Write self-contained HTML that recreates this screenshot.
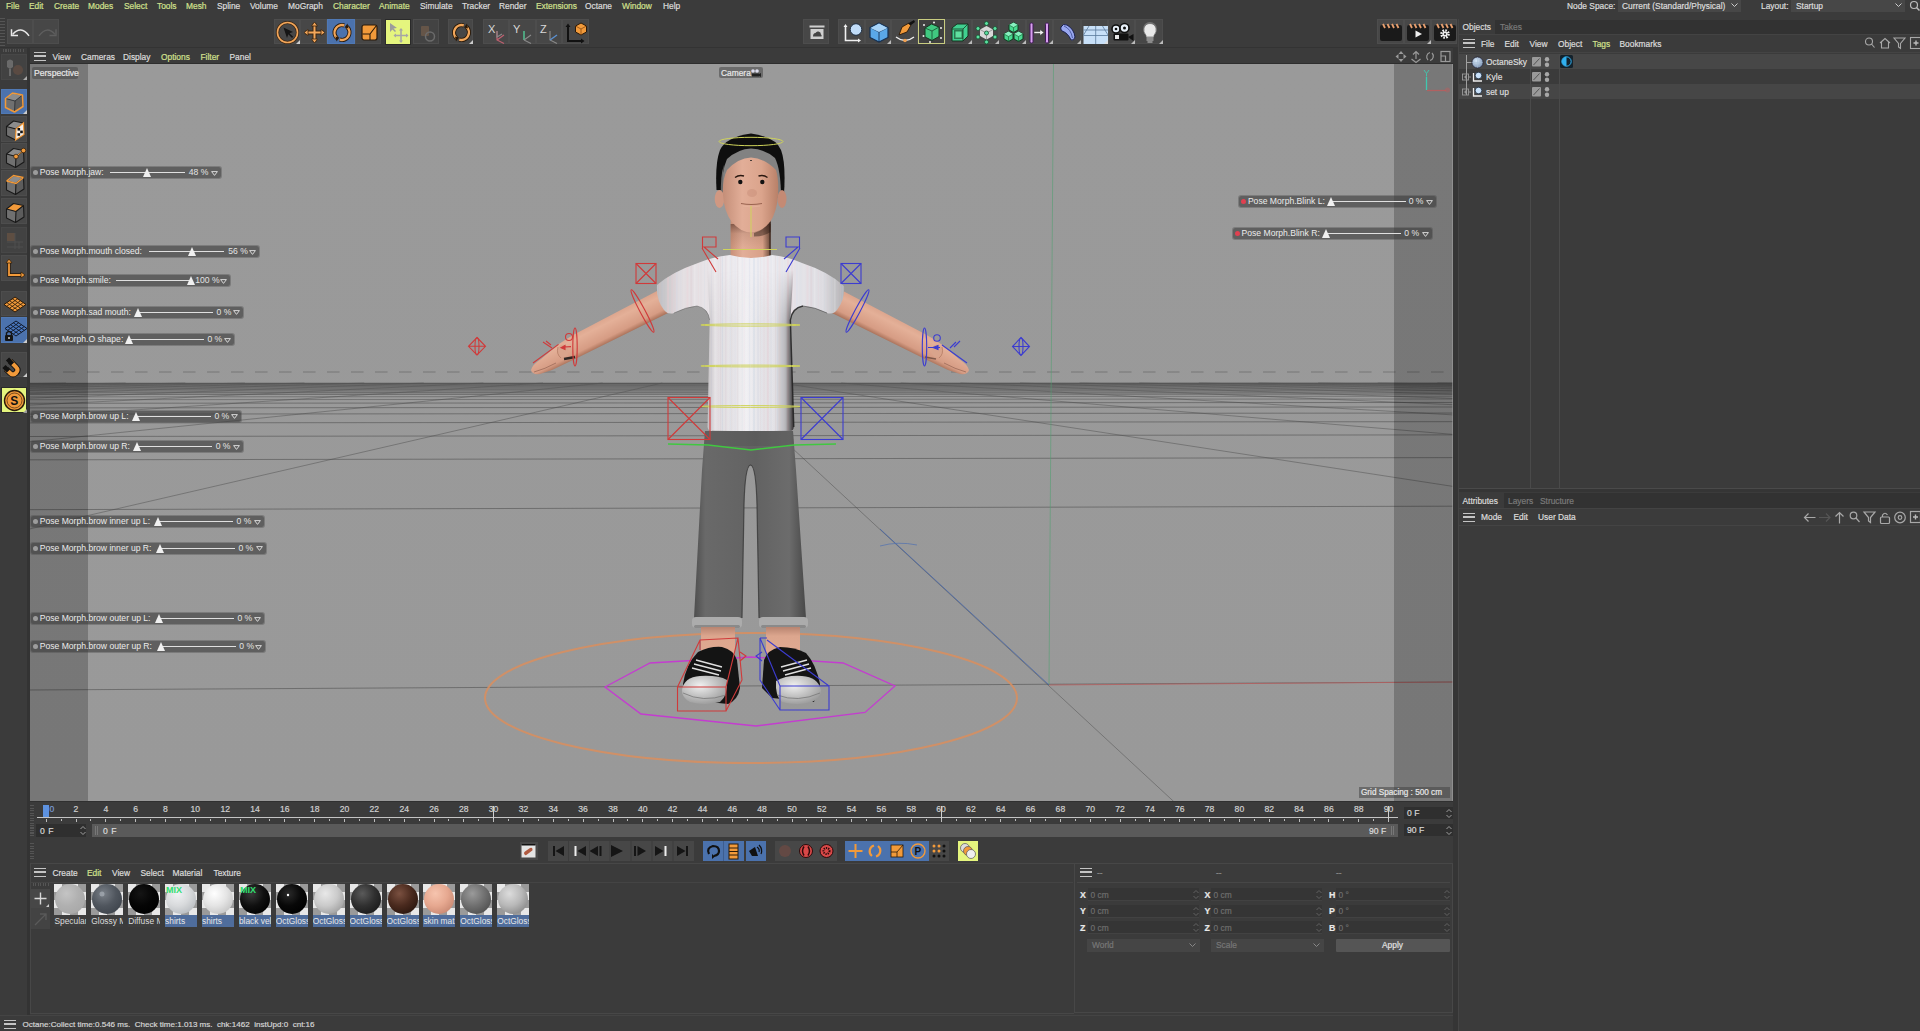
<!DOCTYPE html>
<html><head><meta charset="utf-8">
<style>
*{margin:0;padding:0;box-sizing:border-box}
html,body{width:1920px;height:1031px;overflow:hidden;background:#3b3b3b;font-family:"Liberation Sans",sans-serif;color:#d8d8d8;position:relative}
.a{position:absolute}
.t{position:absolute;white-space:nowrap;font-size:8.4px;line-height:10px;color:#dcdcdc;-webkit-text-stroke:0.2px currentColor}
.y{color:#d2e08e}
.g{color:#8a8a8a}
.rn{width:20px;text-align:center;font-size:8.6px;color:#d0d0d0}
.bt{position:absolute;width:26px;height:25px;background:#474747;border:1px solid #4d4d4d}
.bt svg{position:absolute;left:0;top:0}
.ham{position:absolute;width:11.5px;height:9px;border-top:1.5px solid #c4c4c4;border-bottom:1.5px solid #c4c4c4}
.ham:after{content:"";position:absolute;left:0;right:0;top:2.25px;height:1.5px;background:#c4c4c4}
.pm{position:absolute;height:11px;background:rgba(60,60,60,0.62);border-radius:2px;box-shadow:0 0 0 1px rgba(70,70,70,0.35)}
.pm .d{position:absolute;left:2px;top:3px;width:5px;height:5px;border-radius:50%;background:#9c9c9c}
.pm .l{position:absolute;left:8.5px;top:0;font-size:8.6px;line-height:11px;color:#ececec;white-space:nowrap}
.pm .ln{position:absolute;top:5px;height:1px;background:#e0e0e0}
.pm .th{position:absolute;top:1px;width:0;height:0;border-left:4px solid transparent;border-right:4px solid transparent;border-bottom:9px solid #f0f0f0}
.pm .v{position:absolute;top:0;font-size:8.6px;line-height:11px;color:#e4e4e4;white-space:nowrap}
.pm .dd{position:absolute;top:2.5px;width:7px;height:5px;background:linear-gradient(to bottom right,transparent 49%,#ddd 50%,#ddd 62%,transparent 63%),linear-gradient(to bottom left,transparent 49%,#ddd 50%,#ddd 62%,transparent 63%);}
.pm .dd:before{content:"";position:absolute;left:0;top:0;width:7px;height:1px;background:#ddd}
.mt{position:absolute;top:884px;width:32px;height:44px}
.mt .s{position:absolute;left:0;top:0;width:32px;height:31px;background:#d8d8d8;overflow:hidden}
.mt .lb{position:absolute;left:0;top:31px;width:32px;height:12px;font-size:8.4px;line-height:12px;color:#dcdcdc;overflow:hidden;white-space:nowrap;background:#3e3e3e}
.mt.sel .lb{background:#4f6d9c;color:#e8e8e8}
.fld{position:absolute;height:13px;background:#353535;border-bottom:1px solid #424242}
</style></head><body>
<!-- menu -->
<span class="t y" style="left:6px;top:1px">File</span>
<span class="t y" style="left:29px;top:1px">Edit</span>
<span class="t y" style="left:54px;top:1px">Create</span>
<span class="t y" style="left:88px;top:1px">Modes</span>
<span class="t y" style="left:124px;top:1px">Select</span>
<span class="t y" style="left:157px;top:1px">Tools</span>
<span class="t y" style="left:186px;top:1px">Mesh</span>
<span class="t" style="left:217px;top:1px">Spline</span>
<span class="t" style="left:250px;top:1px">Volume</span>
<span class="t" style="left:288px;top:1px">MoGraph</span>
<span class="t y" style="left:333px;top:1px">Character</span>
<span class="t y" style="left:379px;top:1px">Animate</span>
<span class="t" style="left:420px;top:1px">Simulate</span>
<span class="t" style="left:462px;top:1px">Tracker</span>
<span class="t" style="left:499px;top:1px">Render</span>
<span class="t y" style="left:536px;top:1px">Extensions</span>
<span class="t" style="left:585px;top:1px">Octane</span>
<span class="t y" style="left:622px;top:1px">Window</span>
<span class="t" style="left:663px;top:1px">Help</span>
<span class="t" style="left:1567px;top:1px">Node Space:</span>
<div class="a" style="left:1618px;top:0;width:123px;height:12px;background:#474747"></div>
<span class="t" style="left:1622px;top:1px">Current (Standard/Physical)</span>
<svg class="a" style="left:1731px;top:3px" width="7" height="5"><path d="M0.5 0.5 L3.5 3.5 L6.5 0.5" stroke="#ccc" fill="none"/></svg>
<span class="t" style="left:1761px;top:1px">Layout:</span>
<div class="a" style="left:1791px;top:0;width:114px;height:12px;background:#474747"></div>
<span class="t" style="left:1796px;top:1px">Startup</span>
<svg class="a" style="left:1895px;top:3px" width="7" height="5"><path d="M0.5 0.5 L3.5 3.5 L6.5 0.5" stroke="#ccc" fill="none"/></svg>
<svg class="a" style="left:1909px;top:0px" width="11" height="12"><circle cx="5" cy="5" r="3.5" stroke="#bbb" fill="none" stroke-width="1.2"/><path d="M7.5 7.5 L10.5 10.5" stroke="#bbb" stroke-width="1.5"/></svg>
<!-- toolbar separator lines -->
<div class="a" style="left:0;top:47px;width:1457px;height:1px;background:#333"></div>
<div class="a" style="left:0;top:18px;width:5px;height:28px;background:repeating-linear-gradient(#555 0 1px,transparent 1px 3px)"></div>
<!-- undo/redo -->
<div class="bt" style="left:7px;top:19px;width:26px"><svg width="26" height="25"><path d="M3.5 9.3 V15.5 H10" stroke="#e8e8e8" stroke-width="1.5" fill="none"/><path d="M4.6 14.4 Q13 5 21 15.9" stroke="#e8e8e8" stroke-width="1.5" fill="none"/></svg></div>
<div class="bt" style="left:33px;top:19px;width:26px"><svg width="26" height="25"><path d="M22 9.3 V15.5 H15.5" stroke="#5e5e5e" stroke-width="1.4" fill="none"/><path d="M5 15.9 Q13 5 21 14.4" stroke="#5e5e5e" stroke-width="1.4" fill="none"/></svg></div>
<!-- viewport menu -->
<div class="a" style="left:30px;top:63px;width:1423px;height:1px;background:#2e2e2e"></div>
<div class="ham" style="left:34px;top:52px"></div>
<span class="t" style="left:52.5px;top:51.5px">View</span>
<span class="t" style="left:81px;top:51.5px">Cameras</span>
<span class="t" style="left:123px;top:51.5px">Display</span>
<span class="t y" style="left:161px;top:51.5px">Options</span>
<span class="t y" style="left:200.5px;top:51.5px">Filter</span>
<span class="t" style="left:229.5px;top:51.5px">Panel</span>
<!-- tools group -->
<div class="bt" style="left:274px;top:19px"><svg width="26" height="25"><circle cx="12.5" cy="12.5" r="10" stroke="#3a2410" stroke-width="3" fill="none"/><circle cx="12.5" cy="12.5" r="10" stroke="#f2a65a" stroke-width="1.6" fill="none"/><path d="M8.5 7.5 L12 18 L13.3 14.3 L17 18 L18.2 16.8 L14.5 13.2 L18 12 Z" fill="#151515"/><path d="M21 24 L25 20 L25 24Z" fill="#ccc"/></svg></div>
<div class="bt" style="left:300px;top:19px;width:27px"><svg width="27" height="25"><path d="M13.5 3.5 V21.5 M4.5 12.5 H22.5" stroke="#3a2410" stroke-width="4"/><path d="M13.5 3.5 V21.5 M4.5 12.5 H22.5" stroke="#f2a65a" stroke-width="2"/><path d="M13.5 2 L10.5 6 H16.5Z M13.5 23 L10.5 19 H16.5Z M3 12.5 L7 9.5 V15.5Z M24 12.5 L20 9.5 V15.5Z" fill="#f2a65a" stroke="#3a2410" stroke-width="0.8"/></svg></div>
<div class="bt" style="left:327px;top:19px;width:28px;background:#4b72ad;border-color:#5079b5"><svg width="28" height="25"><path d="M16.3 5.4 A7.5 7.5 0 0 0 9 18.1 M11.7 19.6 A7.5 7.5 0 0 0 19 6.9" stroke="#2a1a0a" stroke-width="4.2" fill="none"/><path d="M16.3 5.4 A7.5 7.5 0 0 0 9 18.1 M11.7 19.6 A7.5 7.5 0 0 0 19 6.9" stroke="#f2a65a" stroke-width="2.4" fill="none"/><path d="M19.5 3.5 L20.5 8.5 L16.5 7.5Z M8.5 21.5 L7.5 16.5 L11.5 17.5Z" fill="#2a1a0a"/></svg></div>
<div class="bt" style="left:355px;top:19px"><svg width="26" height="25"><rect x="6" y="5" width="15" height="15" rx="2" fill="#f29a3a" stroke="#2a1a0a" stroke-width="1.2"/><path d="M6.5 14 H14 V20 M14 14 L20.5 5.5" stroke="#2a1a0a" stroke-width="1.1" fill="none"/></svg></div>
<div class="bt" style="left:385px;top:19px;width:26px;height:26px;background:#e5f57e;border:1px solid #2a2a2a"><svg width="26" height="25"><path d="M4 3 L4 12 L6.5 9.5 L9 12 L10 11 L7.5 8.5 L11 8 Z" fill="#9c9c9c"/><path d="M15 9 V22 M8.5 15.5 H21.5" stroke="#a6a6a6" stroke-width="1.6"/><path d="M15 8 L13 10.5 H17Z M15 23 L13 20.5 H17Z M7.5 15.5 L10 13.5 V17.5Z M22.5 15.5 L20 13.5 V17.5Z" fill="#a6a6a6"/></svg></div>
<div class="bt" style="left:413px;top:19px;width:26px;background:#434343"><svg width="26" height="25"><rect x="7" y="6" width="8" height="10" rx="1" fill="#6e5a4a" opacity="0.8"/><circle cx="16" cy="16.5" r="4.5" stroke="#6b6b6b" stroke-width="1.5" fill="none"/></svg></div>
<div class="bt" style="left:448px;top:19px;width:25px"><svg width="25" height="25"><g transform="translate(-1.5,0)"><path d="M16.3 5.4 A7.5 7.5 0 0 0 9 18.1 M11.7 19.6 A7.5 7.5 0 0 0 19 6.9" stroke="#2a1a0a" stroke-width="4.2" fill="none"/><path d="M16.3 5.4 A7.5 7.5 0 0 0 9 18.1 M11.7 19.6 A7.5 7.5 0 0 0 19 6.9" stroke="#f2a65a" stroke-width="2.4" fill="none"/><path d="M19.5 3.5 L20.5 8.5 L16.5 7.5Z M8.5 21.5 L7.5 16.5 L11.5 17.5Z" fill="#2a1a0a"/></g><path d="M20 24 L24 20 L24 24Z" fill="#ccc"/></svg></div>
<div class="bt" style="left:483px;top:19px"><svg width="26" height="25"><text x="4" y="13" font-family="Liberation Sans" font-size="11" fill="#d8d8d8">X</text><path d="M13 11 V20 L20 23.5 M13 20 L20 15" stroke="#c06070" stroke-width="1.2" fill="none"/><path d="M13 11 V17 L18 14" stroke="#8a8a8a" stroke-width="1.1" fill="none"/></svg></div>
<div class="bt" style="left:509px;top:19px;width:27px"><svg width="27" height="25"><text x="3" y="13" font-family="Liberation Sans" font-size="11" fill="#d8d8d8">Y</text><path d="M14 11 V20" stroke="#50c090" stroke-width="1.5"/><path d="M14 20 L21 23.5 M14 20 L21 15" stroke="#8a8a8a" stroke-width="1.1" fill="none"/></svg></div>
<div class="bt" style="left:536px;top:19px"><svg width="26" height="25"><text x="3" y="13" font-family="Liberation Sans" font-size="11" fill="#d8d8d8">Z</text><path d="M13 11 V20 L20 23.5" stroke="#8a8a8a" stroke-width="1.1" fill="none"/><path d="M13 20 L20 15" stroke="#5a90d0" stroke-width="1.4"/></svg></div>
<div class="bt" style="left:562px;top:19px;width:27px"><svg width="27" height="25"><path d="M5 6 V21 H19" stroke="#111" stroke-width="2" fill="none"/><path d="M5 3.5 L2.5 7 H7.5Z M21.5 21 L18 18.5 V23.5Z" fill="#111"/><path d="M18 3 L23.5 6 V12 L18 15 L12.5 12 V6Z" fill="#f29a3a" stroke="#2a1a0a" stroke-width="1"/><path d="M12.5 6 L18 9 L23.5 6 M18 9 V15" stroke="#8a4a10" stroke-width="0.8" fill="none"/></svg></div>
<!-- cloud -->
<div class="bt" style="left:803px;top:19px"><svg width="26" height="25"><rect x="5.5" y="5.5" width="15" height="2" fill="#cfcfcf"/><rect x="6.5" y="9" width="13" height="10" fill="#cfcfcf"/><path d="M9 16.5 Q9 13 11.5 13 Q12.5 11 14.5 11.5 Q17 12 17 14.5 Q18 15 17.5 16.5Z" fill="#444"/></svg></div>
<div class="bt" style="left:838px;top:19px;width:27px"><svg width="27" height="25"><path d="M6.5 6 V20.5 H20" stroke="#f0f0f0" stroke-width="1.6" fill="none"/><path d="M6.5 4 L4.5 7 H8.5Z M22 20.5 L19 18.5 V22.5Z" fill="#f0f0f0"/><circle cx="17" cy="9.5" r="5.8" fill="#c0dcf8" stroke="#1c2c40" stroke-width="1"/></svg></div>
<div class="bt" style="left:865px;top:19px;width:26px"><svg width="26" height="25"><path d="M13 3 L22 7.5 V17.5 L13 22 L4 17.5 V7.5Z" fill="#5aa8e8" stroke="#173050" stroke-width="1.2"/><path d="M4 7.5 L13 12 L22 7.5 M13 12 V22" stroke="#173050" stroke-width="0.9" fill="none"/><path d="M4.5 8 L13 12 L21.5 8 L13 3.5Z" fill="#a8d4f8"/><path d="M21 24 L25 20 V24Z" fill="#bbb"/></svg></div>
<div class="bt" style="left:891px;top:19px;width:27px"><svg width="27" height="25"><path d="M4 17 Q13 24 22 17" stroke="#eee" stroke-width="1.3" fill="none"/><circle cx="13" cy="20.5" r="1.8" fill="#f0a050"/><path d="M7 15 L10 7 L17 3 L19 5 L15 12Z" fill="#f29a3a" stroke="#2a1a0a" stroke-width="0.9"/><path d="M16 3.5 L22 0 L23 2 L18.5 5.5Z" fill="#111"/></svg></div>
<div class="bt" style="left:918px;top:19px;width:27px;background:#404040;border:1.5px solid #c8cc80"><svg width="27" height="25"><path d="M12.5 4 L20 7 V16.5 L13 20.5 L6 17 V8Z" fill="#40c880" stroke="#173520" stroke-width="1"/><path d="M6 8 L13 11 L20 7 M13 11 V20.5" stroke="#1a4a30" stroke-width="0.8" fill="none"/><g fill="#eee"><circle cx="5" cy="5" r="1"/><circle cx="15" cy="2.5" r="1"/><circle cx="22" cy="8" r="1"/><circle cx="22" cy="18" r="1"/><circle cx="11" cy="22" r="1"/><circle cx="4.5" cy="16" r="1"/></g></svg></div>
<div class="bt" style="left:945px;top:19px;width:27px"><svg width="27" height="25"><path d="M6 8 L11 4 H22 V16 L17 21 H6Z" fill="#40d090" stroke="#173520" stroke-width="1"/><rect x="8" y="10" width="9" height="9" fill="#2a7a50"/><rect x="9.5" y="11.5" width="6" height="6" fill="#60e0a0"/><path d="M22 4 L17 9 V21 M6 9 H17" stroke="#173520" stroke-width="0.8" fill="none"/><path d="M22 24 L26 20 V24Z" fill="#bbb"/></svg></div>
<div class="bt" style="left:972px;top:19px;width:27px"><svg width="27" height="25"><path d="M13.5 6 L20 9.5 V16 L13.5 19.5 L7 16 V9.5Z" fill="#d8d8d8"/><path d="M7 9.5 L13.5 13 L20 9.5 M13.5 13 V19.5" stroke="#888" stroke-width="0.8" fill="none"/><g fill="#5ae0a0" stroke="#155030" stroke-width="0.8"><circle cx="13.5" cy="3.5" r="2"/><circle cx="22" cy="8.5" r="2"/><circle cx="22" cy="17" r="2"/><circle cx="13.5" cy="22" r="2"/><circle cx="5" cy="17" r="2"/><circle cx="5" cy="8.5" r="2"/><circle cx="13.5" cy="13" r="2"/></g><path d="M22 24 L26 20 V24Z" fill="#bbb"/></svg></div>
<div class="bt" style="left:999px;top:19px;width:27px"><svg width="27" height="25"><path d="M13.5 2.5 L18.0 5.0 V10.0 L13.5 12.5 L9.0 10.0 V5.0Z" fill="#48d890" stroke="#0e3a1e" stroke-width="1"/><path d="M9.0 5.0 L13.5 7.5 L18.0 5.0 L13.5 2.5Z" fill="#88f0c0"/><path d="M13.5 7.5 V12.5 M9.0 5.0 L13.5 7.5 L18.0 5.0" stroke="#1a6a3a" stroke-width="0.7" fill="none"/><path d="M8.5 11.5 L13.0 14.0 V19.0 L8.5 21.5 L4.0 19.0 V14.0Z" fill="#48d890" stroke="#0e3a1e" stroke-width="1"/><path d="M4.0 14.0 L8.5 16.5 L13.0 14.0 L8.5 11.5Z" fill="#88f0c0"/><path d="M8.5 16.5 V21.5 M4.0 14.0 L8.5 16.5 L13.0 14.0" stroke="#1a6a3a" stroke-width="0.7" fill="none"/><path d="M18.5 11.5 L23.0 14.0 V19.0 L18.5 21.5 L14.0 19.0 V14.0Z" fill="#48d890" stroke="#0e3a1e" stroke-width="1"/><path d="M14.0 14.0 L18.5 16.5 L23.0 14.0 L18.5 11.5Z" fill="#88f0c0"/><path d="M18.5 16.5 V21.5 M14.0 14.0 L18.5 16.5 L23.0 14.0" stroke="#1a6a3a" stroke-width="0.7" fill="none"/><path d="M22 24 L26 20 V24Z" fill="#bbb"/></svg></div>
<div class="bt" style="left:1026px;top:19px;width:27px"><svg width="27" height="25"><rect x="3" y="3" width="3" height="20" rx="1.2" fill="#d8a0f0" stroke="#401858" stroke-width="1"/><rect x="18.5" y="3" width="3" height="20" rx="1.2" fill="#d8a0f0" stroke="#401858" stroke-width="1"/><path d="M7 11.5 H13 V9.5 L17 12.5 L13 15.5 V13.5 H7Z" fill="#f0f0f0" stroke="#333" stroke-width="0.5"/><path d="M22 24 L26 20 V24Z" fill="#bbb"/></svg></div>
<div class="bt" style="left:1053px;top:19px;width:28px"><svg width="28" height="25"><path d="M7 7 Q9 3 13 5 Q20 9 21 17 Q20 21 17 20 Q14 13 8 11 Q6 9 7 7Z" fill="#9aa8f0" stroke="#1a2050" stroke-width="1"/><path d="M10 6 Q17 9 18.5 18" stroke="#3a4a90" stroke-width="0.8" fill="none"/><path d="M23 24 L27 20 V24Z" fill="#bbb"/></svg></div>
<div class="bt" style="left:1081px;top:19px;width:27px"><svg width="27" height="25"><path d="M1.5 6 H26 V24 H1.5Z" fill="#c8e0f8"/><path d="M1.5 10 H26 M1.5 15.5 H26 M13.7 6 V24 M7 6 L1.5 15 M20.5 6 L26 15" stroke="#5a7a9a" stroke-width="0.8" fill="none"/><path d="M22 24 L26 20 V24Z" fill="#ddd"/></svg></div>
<div class="bt" style="left:1108px;top:19px;width:27px"><svg width="27" height="25"><circle cx="7" cy="9" r="4" fill="#e8f0f8" stroke="#111" stroke-width="1.6"/><circle cx="7" cy="9" r="1.3" fill="#111"/><circle cx="15.5" cy="8" r="4.5" fill="#e8f0f8" stroke="#111" stroke-width="1.6"/><circle cx="15.5" cy="8" r="1.5" fill="#111"/><rect x="4.5" y="13.5" width="15" height="7" rx="1" fill="#111"/><rect x="6" y="15" width="4" height="4" fill="#e8e8e8"/><path d="M19 17 L24.5 14 V21 Z" fill="#111"/><path d="M22 24 L26 20 V24Z" fill="#bbb"/></svg></div>
<div class="bt" style="left:1135px;top:19px;width:28px"><svg width="28" height="25"><circle cx="14" cy="9" r="7" fill="#f4f4f4" opacity="0.25"/><path d="M10 15.5 Q7 12 8 8 Q9.5 3.5 14 3.5 Q18.5 3.5 20 8 Q21 12 18 15.5 V17 H10Z" fill="#e8e8e8" stroke="#555" stroke-width="0.6"/><path d="M10.5 18 H17.5 M10.5 20 H17.5 M11.5 22 H16.5" stroke="#d0d0d0" stroke-width="1.2"/><path d="M23 24 L27 20 V24Z" fill="#bbb"/></svg></div>
<!-- render -->
<div class="bt" style="left:1377px;top:19px;width:27px"><svg width="27" height="25"><rect x="2" y="5" width="22" height="16" rx="2" fill="#1a1a1a"/><path d="M5 4 L7 8 M9.5 4 L11.5 8 M14 4 L16 8 M18.5 4 L20.5 8" stroke="#e8a070" stroke-width="1.8"/></svg></div>
<div class="bt" style="left:1404px;top:19px;width:27px"><svg width="27" height="25"><rect x="2" y="5" width="22" height="16" rx="2" fill="#1a1a1a"/><path d="M5 4 L7 8 M9.5 4 L11.5 8 M14 4 L16 8 M18.5 4 L20.5 8" stroke="#e8a070" stroke-width="1.8"/><path d="M10.5 10.5 L17 14 L10.5 17.5Z" fill="#f0f0f0"/><path d="M22 24 L26 20 V24Z" fill="#bbb"/></svg></div>
<div class="bt" style="left:1431px;top:19px;width:26px"><svg width="26" height="25"><rect x="2" y="5" width="22" height="16" rx="2" fill="#1a1a1a"/><path d="M5 4 L7 8 M9.5 4 L11.5 8 M14 4 L16 8 M18.5 4 L20.5 8" stroke="#e8a070" stroke-width="1.8"/><circle cx="13" cy="14" r="3.6" fill="none" stroke="#f0f0f0" stroke-width="2.4" stroke-dasharray="1.6 1.2"/><circle cx="13" cy="14" r="2.6" fill="#f0f0f0"/><circle cx="13" cy="14" r="1" fill="#1a1a1a"/></svg></div>
<!-- viewport nav icons -->
<svg class="a" style="left:1394px;top:49px" width="60" height="15"><g fill="#9a9a9a"><path d="M7 2 L9.5 5 H4.5Z M7 13 L4.5 10 H9.5Z M1.5 7.5 L4.5 5 V10Z M12.5 7.5 L9.5 5 V10Z"/></g><g stroke="#9a9a9a" fill="none" stroke-width="1.2"><path d="M22 2.5 V10 M19 5.5 L22 2.5 L25 5.5 M17.5 10 L22 13.5 L26.5 10"/><path d="M34 11 A4.5 4.5 0 0 1 36 3.5 M38 4 A4.5 4.5 0 0 1 36 11.5"/><rect x="47" y="2.5" width="9" height="10"/><path d="M47 7 H51.5 V12.5"/></g></svg>
<div class="a" style="left:27px;top:48px;width:3px;height:967px;background:#333"></div>
<div class="a" style="left:3px;top:49px;width:22px;height:3px;background:repeating-linear-gradient(90deg,#555 0 1px,transparent 1px 2.5px)"></div>
<div class="bt" style="left:1px;top:54px;width:26px;height:26px;background:#424242;border-color:#474747"><svg width="26" height="26"><path d="M5 6 Q8 3 11 6 V12 L8 14 L5 12Z" fill="#6a6a6a"/><path d="M8 14 V21" stroke="#6a6a6a" stroke-width="2"/><circle cx="16" cy="15" r="5" fill="#5a4a42"/><path d="M21 25 L25 21 V25Z" fill="#aaa"/></svg></div>
<div class="bt" style="left:1px;top:89px;width:26px;height:25px;background:#4b72ad;border-color:#5079b5"><svg width="26" height="25"><path d="M3.5,8.5 L10.5,3 L20.5,5 L13,11Z" fill="#8c8c8c"/><path d="M3.5,8.5 L13,11 L12.5,22 L3.5,17.5Z" fill="#707070"/><path d="M13,11 L20.5,5 L21,16.5 L12.5,22Z" fill="#5c5c5c"/><path d="M3.5,8.5 L10.5,3 L20.5,5 L21,16.5 L12.5,22 L3.5,17.5Z M3.5,8.5 L13,11 L20.5,5 M13,11 L12.5,22" stroke="#2a2a2a" stroke-width="0.8" fill="none" stroke-linejoin="round"/><path d="M3.5,8.5 L10.5,3 L20.5,5 L21,16.5 L12.5,22 L3.5,17.5Z" stroke="#f29a3a" stroke-width="1.5" fill="none" stroke-linejoin="round"/><path d="M21 24 L25 20 V24Z" fill="#ccc"/></svg></div>
<div class="bt" style="left:1px;top:116px;width:26px;height:26px"><svg width="26" height="26"><g transform="translate(1,1)"><path d="M3.5,8.5 L10.5,3 L20.5,5 L13,11Z" fill="#8c8c8c"/><path d="M3.5,8.5 L13,11 L12.5,22 L3.5,17.5Z" fill="#707070"/><path d="M13,11 L20.5,5 L21,16.5 L12.5,22Z" fill="#5c5c5c"/><path d="M3.5,8.5 L10.5,3 L20.5,5 L21,16.5 L12.5,22 L3.5,17.5Z M3.5,8.5 L13,11 L20.5,5 M13,11 L12.5,22" stroke="#1a1a1a" stroke-width="1.1" fill="none" stroke-linejoin="round"/><path d="M13,11 L20.5,5 L21,16.5 L12.5,22Z" fill="#f4f0ec" stroke="#f29a3a" stroke-width="1.2"/><g fill="#111"><rect x="14.5" y="10" width="2.6" height="2.6"/><rect x="17.2" y="12.6" width="2.6" height="2.6"/><rect x="14.5" y="15.2" width="2.6" height="2.6"/><rect x="11.8" y="12.6" width="2.6" height="2.6" opacity="0"/></g></g></svg></div>
<div class="bt" style="left:1px;top:143px;width:26px;height:26px"><svg width="26" height="26"><g transform="translate(1,1.5)"><path d="M3.5,8.5 L10.5,3 L20.5,5 L13,11Z" fill="#8c8c8c"/><path d="M3.5,8.5 L13,11 L12.5,22 L3.5,17.5Z" fill="#707070"/><path d="M13,11 L20.5,5 L21,16.5 L12.5,22Z" fill="#5c5c5c"/><path d="M3.5,8.5 L10.5,3 L20.5,5 L21,16.5 L12.5,22 L3.5,17.5Z M3.5,8.5 L13,11 L20.5,5 M13,11 L12.5,22" stroke="#1a1a1a" stroke-width="1.1" fill="none" stroke-linejoin="round"/><path d="M13,11 L20.5,5" stroke="#f29a3a" stroke-width="1"/><circle cx="13" cy="11" r="2.3" fill="#f29a3a" stroke="#2a1a0a" stroke-width="0.7"/><circle cx="20.5" cy="5" r="2.3" fill="#f29a3a" stroke="#2a1a0a" stroke-width="0.7"/></g></svg></div>
<div class="bt" style="left:1px;top:170px;width:26px;height:26px"><svg width="26" height="26"><g transform="translate(1,1.5)"><path d="M3.5,8.5 L10.5,3 L20.5,5 L13,11Z" fill="#8c8c8c"/><path d="M3.5,8.5 L13,11 L12.5,22 L3.5,17.5Z" fill="#707070"/><path d="M13,11 L20.5,5 L21,16.5 L12.5,22Z" fill="#5c5c5c"/><path d="M3.5,8.5 L10.5,3 L20.5,5 L21,16.5 L12.5,22 L3.5,17.5Z M3.5,8.5 L13,11 L20.5,5 M13,11 L12.5,22" stroke="#1a1a1a" stroke-width="1.1" fill="none" stroke-linejoin="round"/><path d="M3.5,8.5 L10.5,3 L20.5,5 M3.5,8.5 L13,11 L20.5,5" stroke="#f29a3a" stroke-width="1.4" fill="none"/></g></svg></div>
<div class="bt" style="left:1px;top:198px;width:26px;height:26px"><svg width="26" height="26"><g transform="translate(1,1.5)"><path d="M3.5,8.5 L10.5,3 L20.5,5 L13,11Z" fill="#f29a3a"/><path d="M3.5,8.5 L13,11 L12.5,22 L3.5,17.5Z" fill="#707070"/><path d="M13,11 L20.5,5 L21,16.5 L12.5,22Z" fill="#5c5c5c"/><path d="M3.5,8.5 L10.5,3 L20.5,5 L21,16.5 L12.5,22 L3.5,17.5Z M3.5,8.5 L13,11 L20.5,5 M13,11 L12.5,22" stroke="#1a1a1a" stroke-width="1.1" fill="none" stroke-linejoin="round"/></g></svg></div>
<div class="bt" style="left:1px;top:227px;width:26px;height:26px;background:#424242;border-color:#474747"><svg width="26" height="26"><rect x="5" y="5" width="8" height="8" fill="#5e4e42"/><path d="M5 14 H21 M5 19 H21 M13 5 V21 M17 14 V21" stroke="#4e4e4e" stroke-width="1"/></svg></div>
<div class="bt" style="left:1px;top:255px;width:26px;height:26px"><svg width="26" height="26"><path d="M7 6 V19 H20" stroke="#2a1a0a" stroke-width="3.4" fill="none"/><path d="M7 6 V19 H20" stroke="#f29a3a" stroke-width="1.8" fill="none"/><path d="M7 3 L4 7 H10Z M23 19 L19 16 V22Z" fill="#f29a3a" stroke="#2a1a0a" stroke-width="0.7"/></svg></div>
<div class="bt" style="left:1px;top:291px;width:26px;height:25px"><svg width="26" height="25"><path d="M13 5 L24 12.5 L13 20 L2 12.5Z" fill="#f29a3a" stroke="#2a1a0a" stroke-width="1"/><path d="M10.3 6.8 L21.3 14.3 M7.5 8.7 L18.5 16.2 M4.8 10.6 L15.8 18.1 M15.7 6.8 L4.7 14.3 M18.5 8.7 L7.5 16.2 M21.2 10.6 L10.2 18.1" stroke="#2a1a0a" stroke-width="0.8"/></svg></div>
<div class="bt" style="left:1px;top:317px;width:26px;height:26px;background:#4b72ad;border-color:#5079b5"><svg width="26" height="26"><path d="M14 3 L25 10.5 L14 18 L3 10.5Z" fill="#4a78c0" stroke="#101828" stroke-width="1"/><path d="M11.3 4.8 L22.3 12.3 M8.5 6.7 L19.5 14.2 M5.8 8.6 L16.8 16.1 M16.7 4.8 L5.7 12.3 M19.5 6.7 L8.5 14.2 M22.2 8.6 L11.2 16.1" stroke="#101828" stroke-width="0.9"/><rect x="3" y="17" width="8" height="6" rx="1" fill="#151515"/><path d="M4.5 17 V15 Q7 12 9.5 15 V17" stroke="#151515" stroke-width="1.4" fill="none"/><circle cx="7" cy="20" r="1" fill="#ccc"/><path d="M21 25 L25 21 V25Z" fill="#ccc"/></svg></div>
<div class="bt" style="left:1px;top:352px;width:26px;height:25px"><svg width="26" height="25"><path d="M8 8 L14 14 Q17 17 14 20 Q11 23 8 20 L4 16" stroke="#111" stroke-width="6" fill="none"/><path d="M8 8 L14 14 Q17 17 14 20 Q11 23 8 20 L4 16" stroke="#f29a3a" stroke-width="4" fill="none"/><path d="M5.5 6 L10.5 11 M2 13.5 L6.5 18" stroke="#111" stroke-width="4.5"/><path d="M21 24 L25 20 V24Z" fill="#ccc"/></svg></div>
<div class="bt" style="left:1px;top:387px;width:26px;height:26px;background:#e5f57e;border:1px solid #2a2a2a"><svg width="26" height="26"><circle cx="12.5" cy="12.5" r="10" fill="#f29a3a" stroke="#2a1a0a" stroke-width="1.4"/><circle cx="12.5" cy="12.5" r="7.5" fill="none" stroke="#2a1a0a" stroke-width="0.6"/><text x="8.2" y="17" font-family="Liberation Sans" font-weight="bold" font-size="12" fill="#111">S</text><path d="M21 25 L25 21 V25Z" fill="#999"/></svg></div>
<div id="vpwrap" class="a" style="left:30px;top:64px;width:1423px;height:737px;overflow:hidden;background:#999"><svg class="a" style="left:0;top:0" width="1423" height="737" viewBox="30 64 1423 737"><defs>
<linearGradient id="vg" x1="0" y1="0" x2="0" y2="1"><stop offset="0" stop-color="#9a9a9a"/><stop offset="1" stop-color="#999999"/></linearGradient>
<linearGradient id="skinL" x1="0" y1="0" x2="0" y2="1"><stop offset="0" stop-color="#e6b49c"/><stop offset="0.6" stop-color="#d9a087"/><stop offset="1" stop-color="#a87560"/></linearGradient>
<linearGradient id="shirt" x1="0" y1="0" x2="1" y2="0"><stop offset="0" stop-color="#b9b9bb"/><stop offset="0.12" stop-color="#dcdadc"/><stop offset="0.5" stop-color="#eceef2"/><stop offset="0.85" stop-color="#d6d6da"/><stop offset="1" stop-color="#8a8a8c"/></linearGradient>
<linearGradient id="pants" x1="0" y1="0" x2="1" y2="0"><stop offset="0" stop-color="#4e4e4e"/><stop offset="0.1" stop-color="#696969"/><stop offset="0.45" stop-color="#646464"/><stop offset="0.55" stop-color="#626262"/><stop offset="0.85" stop-color="#6c6c6c"/><stop offset="1" stop-color="#484848"/></linearGradient>
<linearGradient id="face" x1="0" y1="0" x2="1" y2="0"><stop offset="0" stop-color="#c48e78"/><stop offset="0.35" stop-color="#e2ae98"/><stop offset="0.7" stop-color="#dba48c"/><stop offset="1" stop-color="#b88068"/></linearGradient>
<radialGradient id="toe" cx="0.4" cy="0.35" r="0.7"><stop offset="0" stop-color="#f0f0f0"/><stop offset="1" stop-color="#9a9a9a"/></radialGradient>
</defs>
<rect x="30" y="64" width="1423" height="737" fill="url(#vg)"/>
<line x1="30" y1="372" x2="1453" y2="372" stroke="#767676" stroke-width="1.1" stroke-dasharray="12.5 11.5" stroke-dashoffset="15"/>
<line x1="30" y1="689.99" x2="1453" y2="681.99" stroke="#4a4a4a" stroke-opacity="0.55" stroke-width="1"/>
<line x1="30" y1="509.66" x2="1453" y2="506.20" stroke="#4a4a4a" stroke-opacity="0.55" stroke-width="1"/>
<line x1="30" y1="459.84" x2="1453" y2="457.63" stroke="#4a4a4a" stroke-opacity="0.55" stroke-width="1"/>
<line x1="30" y1="436.50" x2="1453" y2="434.88" stroke="#4a4a4a" stroke-opacity="0.55" stroke-width="1"/>
<line x1="30" y1="422.96" x2="1453" y2="421.68" stroke="#4a4a4a" stroke-opacity="0.55" stroke-width="1"/>
<line x1="30" y1="414.12" x2="1453" y2="413.06" stroke="#4a4a4a" stroke-opacity="0.55" stroke-width="1"/>
<line x1="30" y1="407.89" x2="1453" y2="406.99" stroke="#4a4a4a" stroke-opacity="0.55" stroke-width="1"/>
<line x1="30" y1="403.27" x2="1453" y2="402.48" stroke="#4a4a4a" stroke-opacity="0.55" stroke-width="1"/>
<line x1="30" y1="399.70" x2="1453" y2="399.00" stroke="#4a4a4a" stroke-opacity="0.45" stroke-width="1"/>
<line x1="30" y1="396.86" x2="1453" y2="396.24" stroke="#4a4a4a" stroke-opacity="0.45" stroke-width="1"/>
<line x1="30" y1="394.55" x2="1453" y2="393.99" stroke="#4a4a4a" stroke-opacity="0.45" stroke-width="1"/>
<line x1="30" y1="392.64" x2="1453" y2="392.12" stroke="#4a4a4a" stroke-opacity="0.45" stroke-width="1"/>
<line x1="30" y1="391.02" x2="1453" y2="390.54" stroke="#4a4a4a" stroke-opacity="0.45" stroke-width="1"/>
<line x1="30" y1="389.64" x2="1453" y2="389.19" stroke="#4a4a4a" stroke-opacity="0.45" stroke-width="1"/>
<line x1="30" y1="388.44" x2="1453" y2="388.03" stroke="#4a4a4a" stroke-opacity="0.45" stroke-width="1"/>
<line x1="30" y1="387.40" x2="1453" y2="387.01" stroke="#4a4a4a" stroke-opacity="0.45" stroke-width="1"/>
<line x1="30" y1="386.48" x2="1453" y2="386.12" stroke="#4a4a4a" stroke-opacity="0.45" stroke-width="1"/>
<line x1="30" y1="385.67" x2="1453" y2="385.32" stroke="#4a4a4a" stroke-opacity="0.45" stroke-width="1"/>
<line x1="30" y1="384.94" x2="1453" y2="384.61" stroke="#4a4a4a" stroke-opacity="0.45" stroke-width="1"/>
<line x1="30" y1="384.28" x2="1453" y2="383.97" stroke="#4a4a4a" stroke-opacity="0.45" stroke-width="1"/>
<line x1="30" y1="383.69" x2="1453" y2="383.40" stroke="#4a4a4a" stroke-opacity="0.45" stroke-width="1"/>
<line x1="30" y1="383.15" x2="1453" y2="382.87" stroke="#4a4a4a" stroke-opacity="0.45" stroke-width="1"/>
<line x1="-95948.57" y1="820.57" x2="-1663.24" y2="383.01" stroke="#4a4a4a" stroke-opacity="0.45" stroke-width="1"/>
<line x1="-93520.00" y1="820.57" x2="-1603.61" y2="383.01" stroke="#4a4a4a" stroke-opacity="0.45" stroke-width="1"/>
<line x1="-91091.43" y1="820.57" x2="-1543.98" y2="383.01" stroke="#4a4a4a" stroke-opacity="0.45" stroke-width="1"/>
<line x1="-88662.86" y1="820.57" x2="-1484.35" y2="383.01" stroke="#4a4a4a" stroke-opacity="0.45" stroke-width="1"/>
<line x1="-86234.29" y1="820.57" x2="-1424.72" y2="383.01" stroke="#4a4a4a" stroke-opacity="0.45" stroke-width="1"/>
<line x1="-83805.71" y1="820.57" x2="-1365.10" y2="383.01" stroke="#4a4a4a" stroke-opacity="0.45" stroke-width="1"/>
<line x1="-81377.14" y1="820.57" x2="-1305.47" y2="383.01" stroke="#4a4a4a" stroke-opacity="0.45" stroke-width="1"/>
<line x1="-78948.57" y1="820.57" x2="-1245.84" y2="383.01" stroke="#4a4a4a" stroke-opacity="0.45" stroke-width="1"/>
<line x1="-76520.00" y1="820.57" x2="-1186.21" y2="383.01" stroke="#4a4a4a" stroke-opacity="0.45" stroke-width="1"/>
<line x1="-74091.43" y1="820.57" x2="-1126.58" y2="383.01" stroke="#4a4a4a" stroke-opacity="0.45" stroke-width="1"/>
<line x1="-71662.86" y1="820.57" x2="-1066.96" y2="383.01" stroke="#4a4a4a" stroke-opacity="0.45" stroke-width="1"/>
<line x1="-69234.29" y1="820.57" x2="-1007.33" y2="383.01" stroke="#4a4a4a" stroke-opacity="0.45" stroke-width="1"/>
<line x1="-66805.71" y1="820.57" x2="-947.70" y2="383.01" stroke="#4a4a4a" stroke-opacity="0.45" stroke-width="1"/>
<line x1="-64377.14" y1="820.57" x2="-888.07" y2="383.01" stroke="#4a4a4a" stroke-opacity="0.45" stroke-width="1"/>
<line x1="-61948.57" y1="820.57" x2="-828.44" y2="383.01" stroke="#4a4a4a" stroke-opacity="0.45" stroke-width="1"/>
<line x1="-59520.00" y1="820.57" x2="-768.81" y2="383.01" stroke="#4a4a4a" stroke-opacity="0.45" stroke-width="1"/>
<line x1="-57091.43" y1="820.57" x2="-709.19" y2="383.01" stroke="#4a4a4a" stroke-opacity="0.45" stroke-width="1"/>
<line x1="-54662.86" y1="820.57" x2="-649.56" y2="383.01" stroke="#4a4a4a" stroke-opacity="0.45" stroke-width="1"/>
<line x1="-52234.29" y1="820.57" x2="-589.93" y2="383.01" stroke="#4a4a4a" stroke-opacity="0.45" stroke-width="1"/>
<line x1="-49805.71" y1="820.57" x2="-530.30" y2="383.01" stroke="#4a4a4a" stroke-opacity="0.45" stroke-width="1"/>
<line x1="-47377.14" y1="820.57" x2="-470.67" y2="383.01" stroke="#4a4a4a" stroke-opacity="0.45" stroke-width="1"/>
<line x1="-44948.57" y1="820.57" x2="-411.05" y2="383.01" stroke="#4a4a4a" stroke-opacity="0.45" stroke-width="1"/>
<line x1="-42520.00" y1="820.57" x2="-351.42" y2="383.01" stroke="#4a4a4a" stroke-opacity="0.45" stroke-width="1"/>
<line x1="-40091.43" y1="820.57" x2="-291.79" y2="383.01" stroke="#4a4a4a" stroke-opacity="0.45" stroke-width="1"/>
<line x1="-37662.86" y1="820.57" x2="-232.16" y2="383.01" stroke="#4a4a4a" stroke-opacity="0.45" stroke-width="1"/>
<line x1="-35234.29" y1="820.57" x2="-172.53" y2="383.01" stroke="#4a4a4a" stroke-opacity="0.45" stroke-width="1"/>
<line x1="-32805.71" y1="820.57" x2="-112.90" y2="383.01" stroke="#4a4a4a" stroke-opacity="0.45" stroke-width="1"/>
<line x1="-30377.14" y1="820.57" x2="-53.28" y2="383.01" stroke="#4a4a4a" stroke-opacity="0.45" stroke-width="1"/>
<line x1="-27948.57" y1="820.57" x2="6.35" y2="383.01" stroke="#4a4a4a" stroke-opacity="0.45" stroke-width="1"/>
<line x1="-25520.00" y1="820.57" x2="65.98" y2="383.01" stroke="#4a4a4a" stroke-opacity="0.45" stroke-width="1"/>
<line x1="-23091.43" y1="820.57" x2="125.61" y2="383.01" stroke="#4a4a4a" stroke-opacity="0.45" stroke-width="1"/>
<line x1="-20662.86" y1="820.57" x2="185.24" y2="383.01" stroke="#4a4a4a" stroke-opacity="0.45" stroke-width="1"/>
<line x1="-18234.29" y1="820.57" x2="244.86" y2="383.01" stroke="#4a4a4a" stroke-opacity="0.45" stroke-width="1"/>
<line x1="-15805.71" y1="820.57" x2="304.49" y2="383.01" stroke="#4a4a4a" stroke-opacity="0.45" stroke-width="1"/>
<line x1="-13377.14" y1="820.57" x2="364.12" y2="383.01" stroke="#4a4a4a" stroke-opacity="0.45" stroke-width="1"/>
<line x1="-10948.57" y1="820.57" x2="423.75" y2="383.01" stroke="#4a4a4a" stroke-opacity="0.45" stroke-width="1"/>
<line x1="-8520.00" y1="820.57" x2="483.38" y2="383.01" stroke="#4a4a4a" stroke-opacity="0.45" stroke-width="1"/>
<line x1="-6091.43" y1="820.57" x2="543.01" y2="383.01" stroke="#4a4a4a" stroke-opacity="0.45" stroke-width="1"/>
<line x1="-3662.86" y1="820.57" x2="602.63" y2="383.01" stroke="#4a4a4a" stroke-opacity="0.45" stroke-width="1"/>
<line x1="-1234.29" y1="820.57" x2="662.26" y2="383.01" stroke="#4a4a4a" stroke-opacity="0.45" stroke-width="1"/>
<line x1="1194.29" y1="820.57" x2="721.89" y2="383.01" stroke="#4a4a4a" stroke-opacity="0.45" stroke-width="1"/>
<line x1="3622.86" y1="820.57" x2="781.52" y2="383.01" stroke="#4a4a4a" stroke-opacity="0.45" stroke-width="1"/>
<line x1="6051.43" y1="820.57" x2="841.15" y2="383.01" stroke="#4a4a4a" stroke-opacity="0.45" stroke-width="1"/>
<line x1="8480.00" y1="820.57" x2="900.78" y2="383.01" stroke="#4a4a4a" stroke-opacity="0.45" stroke-width="1"/>
<line x1="10908.57" y1="820.57" x2="960.40" y2="383.01" stroke="#4a4a4a" stroke-opacity="0.45" stroke-width="1"/>
<line x1="13337.14" y1="820.57" x2="1020.03" y2="383.01" stroke="#4a4a4a" stroke-opacity="0.45" stroke-width="1"/>
<line x1="15765.71" y1="820.57" x2="1079.66" y2="383.01" stroke="#4a4a4a" stroke-opacity="0.45" stroke-width="1"/>
<line x1="18194.29" y1="820.57" x2="1139.29" y2="383.01" stroke="#4a4a4a" stroke-opacity="0.45" stroke-width="1"/>
<line x1="20622.86" y1="820.57" x2="1198.92" y2="383.01" stroke="#4a4a4a" stroke-opacity="0.45" stroke-width="1"/>
<line x1="23051.43" y1="820.57" x2="1258.54" y2="383.01" stroke="#4a4a4a" stroke-opacity="0.45" stroke-width="1"/>
<line x1="25480.00" y1="820.57" x2="1318.17" y2="383.01" stroke="#4a4a4a" stroke-opacity="0.45" stroke-width="1"/>
<line x1="27908.57" y1="820.57" x2="1377.80" y2="383.01" stroke="#4a4a4a" stroke-opacity="0.45" stroke-width="1"/>
<line x1="30337.14" y1="820.57" x2="1437.43" y2="383.01" stroke="#4a4a4a" stroke-opacity="0.45" stroke-width="1"/>
<line x1="32765.71" y1="820.57" x2="1497.06" y2="383.01" stroke="#4a4a4a" stroke-opacity="0.45" stroke-width="1"/>
<line x1="35194.29" y1="820.57" x2="1556.69" y2="383.01" stroke="#4a4a4a" stroke-opacity="0.45" stroke-width="1"/>
<line x1="37622.86" y1="820.57" x2="1616.31" y2="383.01" stroke="#4a4a4a" stroke-opacity="0.45" stroke-width="1"/>
<line x1="40051.43" y1="820.57" x2="1675.94" y2="383.01" stroke="#4a4a4a" stroke-opacity="0.45" stroke-width="1"/>
<line x1="42480.00" y1="820.57" x2="1735.57" y2="383.01" stroke="#4a4a4a" stroke-opacity="0.45" stroke-width="1"/>
<line x1="44908.57" y1="820.57" x2="1795.20" y2="383.01" stroke="#4a4a4a" stroke-opacity="0.45" stroke-width="1"/>
<line x1="47337.14" y1="820.57" x2="1854.83" y2="383.01" stroke="#4a4a4a" stroke-opacity="0.45" stroke-width="1"/>
<line x1="49765.71" y1="820.57" x2="1914.45" y2="383.01" stroke="#4a4a4a" stroke-opacity="0.45" stroke-width="1"/>
<line x1="52194.29" y1="820.57" x2="1974.08" y2="383.01" stroke="#4a4a4a" stroke-opacity="0.45" stroke-width="1"/>
<line x1="54622.86" y1="820.57" x2="2033.71" y2="383.01" stroke="#4a4a4a" stroke-opacity="0.45" stroke-width="1"/>
<line x1="57051.43" y1="820.57" x2="2093.34" y2="383.01" stroke="#4a4a4a" stroke-opacity="0.45" stroke-width="1"/>
<line x1="59480.00" y1="820.57" x2="2152.97" y2="383.01" stroke="#4a4a4a" stroke-opacity="0.45" stroke-width="1"/>
<line x1="61908.57" y1="820.57" x2="2212.60" y2="383.01" stroke="#4a4a4a" stroke-opacity="0.45" stroke-width="1"/>
<line x1="64337.14" y1="820.57" x2="2272.22" y2="383.01" stroke="#4a4a4a" stroke-opacity="0.45" stroke-width="1"/>
<line x1="66765.71" y1="820.57" x2="2331.85" y2="383.01" stroke="#4a4a4a" stroke-opacity="0.45" stroke-width="1"/>
<line x1="69194.29" y1="820.57" x2="2391.48" y2="383.01" stroke="#4a4a4a" stroke-opacity="0.45" stroke-width="1"/>
<line x1="71622.86" y1="820.57" x2="2451.11" y2="383.01" stroke="#4a4a4a" stroke-opacity="0.45" stroke-width="1"/>
<line x1="74051.43" y1="820.57" x2="2510.74" y2="383.01" stroke="#4a4a4a" stroke-opacity="0.45" stroke-width="1"/>
<line x1="76480.00" y1="820.57" x2="2570.36" y2="383.01" stroke="#4a4a4a" stroke-opacity="0.45" stroke-width="1"/>
<line x1="78908.57" y1="820.57" x2="2629.99" y2="383.01" stroke="#4a4a4a" stroke-opacity="0.45" stroke-width="1"/>
<line x1="81337.14" y1="820.57" x2="2689.62" y2="383.01" stroke="#4a4a4a" stroke-opacity="0.45" stroke-width="1"/>
<line x1="83765.71" y1="820.57" x2="2749.25" y2="383.01" stroke="#4a4a4a" stroke-opacity="0.45" stroke-width="1"/>
<line x1="86194.29" y1="820.57" x2="2808.88" y2="383.01" stroke="#4a4a4a" stroke-opacity="0.45" stroke-width="1"/>
<line x1="88622.86" y1="820.57" x2="2868.51" y2="383.01" stroke="#4a4a4a" stroke-opacity="0.45" stroke-width="1"/>
<line x1="91051.43" y1="820.57" x2="2928.13" y2="383.01" stroke="#4a4a4a" stroke-opacity="0.45" stroke-width="1"/>
<line x1="93480.00" y1="820.57" x2="2987.76" y2="383.01" stroke="#4a4a4a" stroke-opacity="0.45" stroke-width="1"/>
<line x1="95908.57" y1="820.57" x2="3047.39" y2="383.01" stroke="#4a4a4a" stroke-opacity="0.45" stroke-width="1"/>
<line x1="98337.14" y1="820.57" x2="3107.02" y2="383.01" stroke="#4a4a4a" stroke-opacity="0.45" stroke-width="1"/><!-- horizon dense band -->
<rect x="30" y="383" width="1423" height="12" fill="#5e5e5e" opacity="0.28"/>
<line x1="30" y1="383.5" x2="1453" y2="383.5" stroke="#555" stroke-width="1.2" opacity="0.7"/>
<!-- axes -->
<line x1="1053.5" y1="64" x2="1049" y2="685" stroke="#4fa070" stroke-width="1" opacity="0.55"/>
<line x1="1049" y1="685" x2="1453" y2="682" stroke="#c05a5a" stroke-width="1" opacity="0.7"/>
<line x1="880" y1="529" x2="1049" y2="685" stroke="#3a60b0" stroke-width="1" opacity="0.7"/>
<path d="M880 546 Q898 541 917 545" stroke="#5070b0" stroke-width="1" fill="none" opacity="0.7"/>
<!-- orange circle -->
<ellipse cx="751" cy="698" rx="266" ry="65" fill="none" stroke="#d68f62" stroke-width="2" opacity="0.9"/>
<!-- magenta octagon -->
<polygon points="605,687 650,663 751,657 843,663 895,686 865,712.5 756,726 641,714" fill="none" stroke="#c43cd0" stroke-width="1.3"/>
<!-- arms -->
<defs>
<linearGradient id="armL" gradientUnits="userSpaceOnUse" x1="594" y1="320" x2="607" y2="346"><stop offset="0" stop-color="#d8a088"/><stop offset="0.3" stop-color="#e4b098"/><stop offset="0.75" stop-color="#d69c84"/><stop offset="0.93" stop-color="#a87058"/><stop offset="1" stop-color="#4a3028"/></linearGradient>
<linearGradient id="armR" gradientUnits="userSpaceOnUse" x1="906" y1="320" x2="893" y2="346"><stop offset="0" stop-color="#d8a088"/><stop offset="0.3" stop-color="#e4b098"/><stop offset="0.75" stop-color="#d69c84"/><stop offset="0.93" stop-color="#a87058"/><stop offset="1" stop-color="#4a3028"/></linearGradient>
<linearGradient id="neckg" x1="0" y1="0" x2="1" y2="0"><stop offset="0" stop-color="#c89078"/><stop offset="0.3" stop-color="#e2ae98"/><stop offset="0.8" stop-color="#d8a088"/><stop offset="1" stop-color="#6a4a3a"/></linearGradient>
<linearGradient id="shirtv" x1="0" y1="0" x2="0" y2="1"><stop offset="0" stop-color="#fff" stop-opacity="0"/><stop offset="0.85" stop-color="#fff" stop-opacity="0"/><stop offset="1" stop-color="#888" stop-opacity="0.35"/></linearGradient>
<pattern id="streak" width="120" height="60" patternUnits="userSpaceOnUse" x="657"><rect x="0.0" width="1.0" height="60" fill="#c8d8f0" opacity="0.17"/><rect x="1.6" width="2.0" height="60" fill="#f0c8d0" opacity="0.16"/><rect x="4.3" width="2.0" height="60" fill="#c8d8f0" opacity="0.09"/><rect x="7.8" width="0.6" height="60" fill="#c8d8f0" opacity="0.10"/><rect x="10.0" width="2.0" height="60" fill="#f0c8d0" opacity="0.29"/><rect x="14.1" width="2.0" height="60" fill="#f0c8d0" opacity="0.21"/><rect x="17.6" width="0.8" height="60" fill="#f0c8d0" opacity="0.20"/><rect x="19.2" width="1.4" height="60" fill="#c8d8f0" opacity="0.20"/><rect x="22.5" width="2.0" height="60" fill="#c8d8f0" opacity="0.10"/><rect x="26.5" width="0.8" height="60" fill="#ffffff" opacity="0.10"/><rect x="29.5" width="2.0" height="60" fill="#f0c8d0" opacity="0.22"/><rect x="33.3" width="2.0" height="60" fill="#d8c0c8" opacity="0.25"/><rect x="37.0" width="1.4" height="60" fill="#ffffff" opacity="0.15"/><rect x="40.8" width="0.8" height="60" fill="#f0c8d0" opacity="0.21"/><rect x="43.5" width="1.0" height="60" fill="#d8c0c8" opacity="0.14"/><rect x="47.4" width="0.6" height="60" fill="#b8c8e0" opacity="0.17"/><rect x="50.4" width="0.8" height="60" fill="#d8c0c8" opacity="0.17"/><rect x="54.1" width="0.6" height="60" fill="#b8c8e0" opacity="0.21"/><rect x="57.4" width="1.0" height="60" fill="#ffffff" opacity="0.23"/><rect x="60.4" width="2.0" height="60" fill="#d8c0c8" opacity="0.10"/><rect x="63.1" width="1.0" height="60" fill="#d8c0c8" opacity="0.23"/><rect x="64.8" width="1.0" height="60" fill="#b8c8e0" opacity="0.30"/><rect x="68.3" width="1.0" height="60" fill="#d8c0c8" opacity="0.28"/><rect x="70.7" width="1.4" height="60" fill="#ffffff" opacity="0.12"/><rect x="72.9" width="0.6" height="60" fill="#c8d8f0" opacity="0.25"/><rect x="74.3" width="0.8" height="60" fill="#d8c0c8" opacity="0.17"/><rect x="77.8" width="0.6" height="60" fill="#c8d8f0" opacity="0.18"/><rect x="80.3" width="0.8" height="60" fill="#d8c0c8" opacity="0.27"/><rect x="82.3" width="1.4" height="60" fill="#ffffff" opacity="0.23"/><rect x="85.1" width="0.8" height="60" fill="#c8d8f0" opacity="0.10"/><rect x="86.8" width="0.8" height="60" fill="#f0c8d0" opacity="0.19"/><rect x="89.6" width="1.0" height="60" fill="#ffffff" opacity="0.08"/><rect x="92.1" width="1.0" height="60" fill="#b8c8e0" opacity="0.20"/><rect x="96.0" width="2.0" height="60" fill="#b8c8e0" opacity="0.22"/><rect x="100.3" width="1.4" height="60" fill="#b8c8e0" opacity="0.17"/><rect x="103.2" width="0.6" height="60" fill="#d8c0c8" opacity="0.22"/><rect x="104.5" width="0.6" height="60" fill="#c8d8f0" opacity="0.18"/><rect x="105.9" width="2.0" height="60" fill="#f0c8d0" opacity="0.10"/><rect x="109.8" width="2.0" height="60" fill="#f0c8d0" opacity="0.29"/><rect x="113.8" width="0.6" height="60" fill="#c8d8f0" opacity="0.22"/><rect x="115.3" width="1.0" height="60" fill="#ffffff" opacity="0.21"/><rect x="118.0" width="0.6" height="60" fill="#d8c0c8" opacity="0.30"/></pattern>
</defs>
<path d="M657 291 L575 334 Q566 339 559 344 L541 359 Q532 365 531 370 Q532 375 540 374 L552 370 L575 359 L668 313 Z" fill="url(#armL)"/>
<path d="M843 291 L925 334 Q934 339 941 344 L959 359 Q968 365 969 370 Q968 375 960 374 L948 370 L925 359 L832 313 Z" fill="url(#armR)"/>
<ellipse cx="563" cy="351" rx="5.5" ry="6.5" fill="#d9a48c"/>
<path d="M558 347 Q556 354 561 358" stroke="#a87058" stroke-width="0.9" fill="none" opacity="0.7"/>
<ellipse cx="937" cy="351" rx="5.5" ry="6.5" fill="#d9a48c"/>
<path d="M942 347 Q944 354 939 358" stroke="#a87058" stroke-width="0.9" fill="none" opacity="0.7"/>
<path d="M564 359 L575 357" stroke="#141414" stroke-width="2.4" opacity="0.85"/>
<path d="M936 359 L925 357" stroke="#4a3028" stroke-width="1.6" opacity="0.6"/>
<path d="M534 372 Q545 369 556 363" stroke="#9a6a58" stroke-width="0.8" fill="none"/>
<path d="M966 372 Q955 369 944 363" stroke="#9a6a58" stroke-width="0.8" fill="none"/>
<!-- neck -->
<defs><linearGradient id="neckSh" x1="0" y1="0" x2="0" y2="1"><stop offset="0" stop-color="#4a2a20" stop-opacity="0.55"/><stop offset="0.4" stop-color="#4a2a20" stop-opacity="0.12"/><stop offset="1" stop-color="#4a2a20" stop-opacity="0"/></linearGradient></defs><path d="M730.6 205 L770.6 205 L770.6 262 L730.6 262Z" fill="url(#neckg)"/><rect x="730.6" y="224" width="40" height="24" fill="url(#neckSh)"/><path d="M770 222 L770 256" stroke="#2a1a14" stroke-width="1.2" opacity="0.8"/>
<!-- shirt -->
<defs>
<linearGradient id="shirt2" gradientUnits="userSpaceOnUse" x1="657" y1="0" x2="845" y2="0"><stop offset="0" stop-color="#bcbcbe"/><stop offset="0.12" stop-color="#e2dde0"/><stop offset="0.5" stop-color="#f0eff3"/><stop offset="0.88" stop-color="#dedde2"/><stop offset="1" stop-color="#b0b0b2"/></linearGradient>
<linearGradient id="torsoSh" gradientUnits="userSpaceOnUse" x1="707" y1="0" x2="794" y2="0"><stop offset="0" stop-color="#000" stop-opacity="0.16"/><stop offset="0.1" stop-color="#000" stop-opacity="0.02"/><stop offset="0.45" stop-color="#fff" stop-opacity="0.12"/><stop offset="0.78" stop-color="#000" stop-opacity="0.03"/><stop offset="0.9" stop-color="#000" stop-opacity="0.2"/><stop offset="1" stop-color="#000" stop-opacity="0.8"/></linearGradient>
<linearGradient id="slvSh" x1="0" y1="0" x2="0" y2="1"><stop offset="0" stop-color="#000" stop-opacity="0"/><stop offset="0.6" stop-color="#000" stop-opacity="0.05"/><stop offset="1" stop-color="#000" stop-opacity="0.3"/></linearGradient>
</defs>
<path d="M730 255 Q712 257 698 263 Q672 272 657 285 Q656 300 664 310 Q668 315 674 313 Q686 307 697 306 Q708 308 709.7 320 L707.6 427 Q708 431 712 431 Q751 433 790 431 Q794 431 793.8 427 L790.4 320 Q792 308 803 306 Q815 307 827 313 Q833 315 837 310 Q845 300 844 286 Q829 272 802 263 Q789 257 772 255 Q751 261 730 255Z" fill="url(#shirt2)"/>
<path d="M730 255 Q712 257 698 263 Q672 272 657 285 Q656 300 664 310 Q668 315 674 313 Q686 307 697 306 Q708 308 709.7 320 L707.6 427 Q708 431 712 431 Q751 433 790 431 Q794 431 793.8 427 L790.4 320 Q792 308 803 306 Q815 307 827 313 Q833 315 837 310 Q845 300 844 286 Q829 272 802 263 Q789 257 772 255 Q751 261 730 255Z" fill="url(#streak)"/>
<defs><linearGradient id="mfade" gradientUnits="userSpaceOnUse" x1="0" y1="270" x2="0" y2="325"><stop offset="0" stop-color="#fff" stop-opacity="0"/><stop offset="1" stop-color="#fff" stop-opacity="1"/></linearGradient><mask id="tmask" maskUnits="userSpaceOnUse" x="650" y="250" width="200" height="190"><rect x="650" y="250" width="200" height="190" fill="url(#mfade)"/></mask></defs><path d="M707 262 L709.7 320 L707.6 427 Q708 431 712 431 Q751 433 790 431 Q794 431 793.8 427 L790.4 320 L794 262Z" fill="url(#torsoSh)" mask="url(#tmask)"/>


<path d="M803 306 Q792 308 790.4 320 L793.8 427" stroke="#1e1e1e" stroke-width="1.4" fill="none" opacity="0.85"/>
<path d="M674 313 Q686 307 697 306 Q708 308 709.7 320" stroke="#555" stroke-width="1" fill="none" opacity="0.45"/><path d="M827 313 Q815 307 803 306" stroke="#333" stroke-width="1" fill="none" opacity="0.5"/>
<path d="M712 431 Q751 433 790 431" stroke="#777" stroke-width="1" fill="none" opacity="0.5"/>
<!-- pants -->
<path d="M705 431 L793 431 L796 470 L806 618 L759 618 L757 505 Q756 466 750.5 465 Q745 466 744 505 L742 618 L694 618 L702 470Z" fill="url(#pants)"/><path d="M742 618 L744 505 Q745 466 750.5 465 Q756 466 757 505 L759 618" stroke="#2e2e2e" stroke-width="1.2" fill="none" opacity="0.7"/>
<path d="M705 431 L793 431 L794 446 L704 446Z" fill="#505050" opacity="0.35"/>
<rect x="692" y="617" width="50" height="11" rx="4" fill="#acacac"/><rect x="694" y="625" width="46" height="3" rx="1.5" fill="#8a8a8a"/>
<rect x="759" y="617" width="49" height="11" rx="4" fill="#acacac"/><rect x="761" y="625" width="45" height="3" rx="1.5" fill="#8a8a8a"/>

<!-- shoes -->
<defs><linearGradient id="ank" x1="0" y1="0" x2="0" y2="1"><stop offset="0" stop-color="#b88470"/><stop offset="0.3" stop-color="#dca68e"/><stop offset="1" stop-color="#e0aa92"/></linearGradient></defs>
<rect x="701" y="627" width="34" height="30" fill="url(#ank)"/>
<rect x="766" y="627" width="34" height="30" fill="url(#ank)"/>
<path d="M683 684 Q686 664 698 652 Q710 646 722 647 Q734 650 737 660 L740 688 Q738 700 728 704 L690 700Z" fill="#141414"/>
<path d="M682 690 Q684 677 700 676 Q718 675 727 680 Q728 696 720 702 Q705 706 690 702 Q682 698 682 690Z" fill="url(#toe)"/>
<path d="M683 693 Q703 703 726 695" stroke="#777" stroke-width="0.8" fill="none"/>
<path d="M696 660 L722 667 M694 664 L721 671 M692 668 L719 675" stroke="#e0e0e0" stroke-width="1.3"/>
<path d="M764 660 Q767 650 780 647 Q795 647 806 653 Q816 664 820 684 L814 702 L772 698 L762 688Z" fill="#141414"/>
<path d="M776 681 Q786 675 802 676 Q818 677 821 690 Q821 698 812 702 Q797 706 782 702 Q775 696 776 681Z" fill="url(#toe)"/>
<path d="M777 695 Q798 703 820 693" stroke="#777" stroke-width="0.8" fill="none"/>
<path d="M781 667 L807 660 M783 671 L809 664 M785 675 L811 668" stroke="#e0e0e0" stroke-width="1.3"/>
<!-- head -->
<path d="M716.5 190 Q715 163 720 150 Q726 137 751 133.5 Q776 137 781 150 Q786 163 784 194 Z" fill="#0e0e0e"/>
<path d="M721.5 198 Q721 172 727 159 Q738 149 751 148.5 Q765 149 775 158 Q781 170 781 198 Z" fill="#828282"/>
<path d="M721 198 Q720 175 724 165 Q722 180 724 198Z" fill="#6a6a6a"/>
<ellipse cx="719.5" cy="199" rx="4.8" ry="9" fill="#d09882"/>
<ellipse cx="782" cy="199" rx="4.5" ry="9" fill="#c48a74"/>
<path d="M727 170 Q738 158 751 157.5 Q764 158 776 170 Q779 180 778 195 Q777 212 770 222 Q762 232 751 232.5 Q740 232 732 222 Q724 212 723 195 Q722 180 727 170Z" fill="url(#face)"/>
<path d="M754 233 Q765 230 770.6 221 L770.6 232 Q764 236.5 754 236.5Z" fill="#2a1a14" opacity="0.45"/>
<path d="M735 177.5 Q739 174.5 744 176 M758.5 176 Q763.5 174.5 767.5 177.5" stroke="#2a1810" stroke-width="1.4" fill="none"/>
<circle cx="740.3" cy="182" r="2.2" fill="#111"/>
<circle cx="762.3" cy="182" r="2.2" fill="#111"/>
<path d="M751 160 L751 161" stroke="#222" stroke-width="1.6"/>
<ellipse cx="752" cy="193" rx="5" ry="4" fill="#c08470" opacity="0.35"/>
<path d="M741 203.5 Q751 205.5 762 203.5" stroke="#9a6450" stroke-width="1.2" fill="none"/>
<path d="M743 206 Q751 208 760 206" stroke="#e8b8a0" stroke-width="1" fill="none" opacity="0.6"/>
<!-- rig: yellow -->
<g stroke="#cfd35a" fill="none" stroke-width="1">
<ellipse cx="751" cy="141.5" rx="32" ry="4.2"/>
<line x1="723" y1="249.5" x2="777" y2="249.5"/>
<line x1="751" y1="206" x2="751" y2="237"/>
<ellipse cx="750.4" cy="325" rx="49.5" ry="1.1"/>
<ellipse cx="750.4" cy="366" rx="49.5" ry="0.9"/>
<ellipse cx="750.4" cy="406.5" rx="49.5" ry="0.9"/>
</g>
<polyline points="668,444 708,445 751,450 794,445 836,444" stroke="#40c840" stroke-width="1.3" fill="none"/>
<!-- rig: red -->
<g stroke="#d03a3a" fill="none" stroke-width="1.1">
<rect x="636" y="263.5" width="20" height="20"/><path d="M636 263.5 L656 283.5 M656 263.5 L636 283.5"/>
<rect x="668" y="397.5" width="42" height="42"/><path d="M668 397.5 L710 439.5 M710 397.5 L668 439.5"/>
<path d="M702.5 249 V237 H716 V247 H704 L718 259 M702 248 L716 272"/>
<ellipse cx="642.5" cy="311" rx="2.5" ry="24" transform="rotate(-28 642.5 311)"/>
<ellipse cx="575" cy="347" rx="2.2" ry="19"/>
<circle cx="569" cy="337" r="3.5"/>
<path d="M533 363 L558.5 344.4 M543 342 L552 348 M546 341 L551 345"/>
<path d="M571 346.6 L564 347 M561 347.7 L565 345.5 L565 349.5Z" fill="#d03a3a"/>
<path d="M477 337.5 L485.5 346.3 L477 355 L468.5 346.3Z M468.5 346.3 H485.5"/><ellipse cx="477" cy="346.3" rx="2" ry="8.5"/>
<path d="M677.5 687 H726 V711 H677.5Z M677.5 687 L700 640 L738 638 L726 687 M726 711 L742 680 L738 638 M700 640 V650"/>
<path d="M740 652 L746 656 L740 661"/>
</g>
<!-- rig: blue -->
<g stroke="#3c3cd0" fill="none" stroke-width="1.1">
<rect x="841" y="263.5" width="20" height="20"/><path d="M841 263.5 L861 283.5 M861 263.5 L841 283.5"/>
<rect x="801" y="397.5" width="42" height="42"/><path d="M801 397.5 L843 439.5 M843 397.5 L801 439.5"/>
<path d="M799.5 249 V237 H786 V247 H798 L784 259 M800 248 L786 272"/>
<ellipse cx="857.5" cy="311" rx="2.5" ry="24" transform="rotate(28 857.5 311)"/>
<ellipse cx="924.5" cy="347" rx="2.2" ry="19"/>
<circle cx="937" cy="338" r="3.3"/>
<path d="M942 345 L967 363 M950 348 L956 342 M954 347 L960 341"/>
<path d="M928 347.5 L940 347.5 M933 347.5 L938 345.5 L938 349.5Z" fill="#3c3cd0"/>
<path d="M1021 337.5 L1029.5 346.5 L1021 355.5 L1012.5 346.5Z M1012.5 346.5 H1029.5"/><ellipse cx="1021" cy="346.5" rx="2" ry="8.5"/>
<path d="M780 686 H829 V710 H780Z M760 638 L780 686 M767 640 L829 686 M760 638 V680 L780 710 M760 638 H767"/>
<path d="M762 652 L756 656 L762 661"/>
</g>
<!-- safe frame strips -->
<rect x="30" y="64" width="58" height="737" fill="#000" opacity="0.22"/>
<rect x="1394" y="64" width="59" height="737" fill="#000" opacity="0.22"/><line x1="1452.5" y1="64" x2="1452.5" y2="801" stroke="#a0a0a0" stroke-width="1" opacity="0.6"/>
<!-- axis gizmo -->
<g stroke-width="1.3"><line x1="1426.5" y1="77" x2="1426.5" y2="90" stroke="#40c8b0"/><line x1="1427" y1="90.5" x2="1446" y2="90.5" stroke="#e05050" opacity="0.55"/></g>
<path d="M1424 70 L1426.5 73.5 L1429 70 M1426.5 73.5 V76.5" stroke="#40c8b0" stroke-width="0.9" fill="none"/>
<circle cx="1447.5" cy="90" r="2.5" fill="#e05050" opacity="0.3"/>
</svg></div><div class="pm" style="left:31.2px;top:167.3px;width:189.5px"><div class="d"></div><span class="l">Pose Morph.jaw:</span><div class="ln" style="left:78.4px;width:75.0px"></div>
<div class="th" style="left:111.5px"></div><span class="v" style="left:157.5px">48 %</span><svg class="a" style="left:179.5px;top:3.5px" width="7" height="5"><path d="M0.6 0.6 H6.4 L3.5 4.4Z" fill="none" stroke="#d8d8d8" stroke-width="1"/></svg></div>
<div class="pm" style="left:31.2px;top:246.2px;width:228.2px"><div class="d"></div><span class="l">Pose Morph.mouth closed:</span><div class="ln" style="left:118.2px;width:75.0px"></div>
<div class="th" style="left:156.6px"></div><span class="v" style="left:197.0px">56 %</span><svg class="a" style="left:218.2px;top:3.5px" width="7" height="5"><path d="M0.6 0.6 H6.4 L3.5 4.4Z" fill="none" stroke="#d8d8d8" stroke-width="1"/></svg></div>
<div class="pm" style="left:31.2px;top:275.3px;width:199.3px"><div class="d"></div><span class="l">Pose Morph.smile:</span><div class="ln" style="left:84.6px;width:75.0px"></div>
<div class="th" style="left:155.8px"></div><span class="v" style="left:164.0px">100 %</span><svg class="a" style="left:189.3px;top:3.5px" width="7" height="5"><path d="M0.6 0.6 H6.4 L3.5 4.4Z" fill="none" stroke="#d8d8d8" stroke-width="1"/></svg></div>
<div class="pm" style="left:31.2px;top:306.5px;width:212.3px"><div class="d"></div><span class="l">Pose Morph.sad mouth:</span><div class="ln" style="left:107.0px;width:75.0px"></div>
<div class="th" style="left:103.0px"></div><span class="v" style="left:185.4px">0 %</span><svg class="a" style="left:202.3px;top:3.5px" width="7" height="5"><path d="M0.6 0.6 H6.4 L3.5 4.4Z" fill="none" stroke="#d8d8d8" stroke-width="1"/></svg></div>
<div class="pm" style="left:31.2px;top:334.4px;width:203.1px"><div class="d"></div><span class="l">Pose Morph.O shape:</span><div class="ln" style="left:98.2px;width:75.0px"></div>
<div class="th" style="left:94.2px"></div><span class="v" style="left:176.2px">0 %</span><svg class="a" style="left:193.1px;top:3.5px" width="7" height="5"><path d="M0.6 0.6 H6.4 L3.5 4.4Z" fill="none" stroke="#d8d8d8" stroke-width="1"/></svg></div>
<div class="pm" style="left:31.2px;top:410.8px;width:210.3px"><div class="d"></div><span class="l">Pose Morph.brow up L:</span><div class="ln" style="left:105.0px;width:75.0px"></div>
<div class="th" style="left:101.0px"></div><span class="v" style="left:183.2px">0 %</span><svg class="a" style="left:200.3px;top:3.5px" width="7" height="5"><path d="M0.6 0.6 H6.4 L3.5 4.4Z" fill="none" stroke="#d8d8d8" stroke-width="1"/></svg></div>
<div class="pm" style="left:31.2px;top:441.0px;width:211.6px"><div class="d"></div><span class="l">Pose Morph.brow up R:</span><div class="ln" style="left:106.3px;width:75.0px"></div>
<div class="th" style="left:102.3px"></div><span class="v" style="left:184.5px">0 %</span><svg class="a" style="left:201.6px;top:3.5px" width="7" height="5"><path d="M0.6 0.6 H6.4 L3.5 4.4Z" fill="none" stroke="#d8d8d8" stroke-width="1"/></svg></div>
<div class="pm" style="left:31.2px;top:516.3px;width:232.7px"><div class="d"></div><span class="l">Pose Morph.brow inner up L:</span><div class="ln" style="left:127.2px;width:75.0px"></div>
<div class="th" style="left:123.2px"></div><span class="v" style="left:205.4px">0 %</span><svg class="a" style="left:222.7px;top:3.5px" width="7" height="5"><path d="M0.6 0.6 H6.4 L3.5 4.4Z" fill="none" stroke="#d8d8d8" stroke-width="1"/></svg></div>
<div class="pm" style="left:31.2px;top:542.6px;width:234.5px"><div class="d"></div><span class="l">Pose Morph.brow inner up R:</span><div class="ln" style="left:129.0px;width:75.0px"></div>
<div class="th" style="left:125.0px"></div><span class="v" style="left:207.2px">0 %</span><svg class="a" style="left:224.5px;top:3.5px" width="7" height="5"><path d="M0.6 0.6 H6.4 L3.5 4.4Z" fill="none" stroke="#d8d8d8" stroke-width="1"/></svg></div>
<div class="pm" style="left:31.2px;top:613.1px;width:233.3px"><div class="d"></div><span class="l">Pose Morph.brow outer up L:</span><div class="ln" style="left:128.0px;width:75.0px"></div>
<div class="th" style="left:124.0px"></div><span class="v" style="left:206.2px">0 %</span><svg class="a" style="left:223.3px;top:3.5px" width="7" height="5"><path d="M0.6 0.6 H6.4 L3.5 4.4Z" fill="none" stroke="#d8d8d8" stroke-width="1"/></svg></div>
<div class="pm" style="left:31.2px;top:641.0px;width:234.3px"><div class="d"></div><span class="l">Pose Morph.brow outer up R:</span><div class="ln" style="left:129.9px;width:75.0px"></div>
<div class="th" style="left:125.9px"></div><span class="v" style="left:208.1px">0 %</span><svg class="a" style="left:224.3px;top:3.5px" width="7" height="5"><path d="M0.6 0.6 H6.4 L3.5 4.4Z" fill="none" stroke="#d8d8d8" stroke-width="1"/></svg></div>
<div class="pm" style="left:1239.4px;top:196.3px;width:196.8px"><div class="d" style="background:#e04050"></div><span class="l">Pose Morph.Blink L:</span><div class="ln" style="left:91.2px;width:75.0px"></div>
<div class="th" style="left:87.2px"></div><span class="v" style="left:169.3px">0 %</span><svg class="a" style="left:186.8px;top:3.5px" width="7" height="5"><path d="M0.6 0.6 H6.4 L3.5 4.4Z" fill="none" stroke="#d8d8d8" stroke-width="1"/></svg></div>
<div class="pm" style="left:1233.0px;top:228.0px;width:198.9px"><div class="d" style="background:#e04050"></div><span class="l">Pose Morph.Blink R:</span><div class="ln" style="left:93.2px;width:75.0px"></div>
<div class="th" style="left:89.2px"></div><span class="v" style="left:171.3px">0 %</span><svg class="a" style="left:188.9px;top:3.5px" width="7" height="5"><path d="M0.6 0.6 H6.4 L3.5 4.4Z" fill="none" stroke="#d8d8d8" stroke-width="1"/></svg></div><div class="a" style="left:32px;top:67px;width:46px;height:12px;background:rgba(70,70,70,0.55);border-radius:2px"></div>
<span class="t" style="left:34px;top:68px;font-size:8.6px;color:#e8e8e8">Perspective</span>
<div class="a" style="left:719px;top:67px;width:44px;height:11px;background:rgba(70,70,70,0.55);border-radius:2px"></div>
<span class="t" style="left:721px;top:67.5px;font-size:8.4px;color:#e8e8e8">Camera</span>
<svg class="a" style="left:750px;top:68px" width="12" height="10"><circle cx="3" cy="3" r="1.8" fill="#dde"/><circle cx="7" cy="3" r="1.8" fill="#dde"/><rect x="2" y="5.5" width="7" height="3" fill="#222"/><path d="M9 6 L11 5 V9 L9 8Z" fill="#222"/></svg>
<div class="a" style="left:1359px;top:787px;width:91px;height:11px;background:rgba(70,70,70,0.55)"></div>
<span class="t" style="left:1361px;top:787.5px;font-size:8.2px;color:#e8e8e8">Grid Spacing : 500 cm</span>
<div class="a" style="left:30px;top:801px;width:1423px;height:1px;background:#303030"></div>
<div class="a" style="left:30px;top:805px;width:4px;height:32px;background:repeating-linear-gradient(#555 0 1px,transparent 1px 2.5px)"></div>
<div class="a" style="left:30px;top:843px;width:4px;height:16px;background:repeating-linear-gradient(#555 0 1px,transparent 1px 2.5px)"></div>
<div class="a" style="left:37px;top:817px;width:1361px;height:1px;background:#c4c4c4"></div>
<div class="a" style="left:45.7px;top:819px;width:1px;height:3px;background:#bdbdbd"></div>
<div class="a" style="left:60.6px;top:819px;width:1px;height:2px;background:#bdbdbd"></div>
<span class="t rn" style="left:66.0px;top:804px">2</span>
<div class="a" style="left:75.5px;top:819px;width:1px;height:3px;background:#bdbdbd"></div>
<div class="a" style="left:90.4px;top:819px;width:1px;height:2px;background:#bdbdbd"></div>
<span class="t rn" style="left:95.9px;top:804px">4</span>
<div class="a" style="left:105.4px;top:819px;width:1px;height:3px;background:#bdbdbd"></div>
<div class="a" style="left:120.3px;top:819px;width:1px;height:2px;background:#bdbdbd"></div>
<span class="t rn" style="left:125.7px;top:804px">6</span>
<div class="a" style="left:135.2px;top:819px;width:1px;height:3px;background:#bdbdbd"></div>
<div class="a" style="left:150.1px;top:819px;width:1px;height:2px;background:#bdbdbd"></div>
<span class="t rn" style="left:155.5px;top:804px">8</span>
<div class="a" style="left:165.0px;top:819px;width:1px;height:3px;background:#bdbdbd"></div>
<div class="a" style="left:179.9px;top:819px;width:1px;height:2px;background:#bdbdbd"></div>
<span class="t rn" style="left:185.3px;top:804px">10</span>
<div class="a" style="left:194.8px;top:819px;width:1px;height:3px;background:#bdbdbd"></div>
<div class="a" style="left:209.8px;top:819px;width:1px;height:2px;background:#bdbdbd"></div>
<span class="t rn" style="left:215.2px;top:804px">12</span>
<div class="a" style="left:224.7px;top:819px;width:1px;height:3px;background:#bdbdbd"></div>
<div class="a" style="left:239.6px;top:819px;width:1px;height:2px;background:#bdbdbd"></div>
<span class="t rn" style="left:245.0px;top:804px">14</span>
<div class="a" style="left:254.5px;top:819px;width:1px;height:3px;background:#bdbdbd"></div>
<div class="a" style="left:269.4px;top:819px;width:1px;height:2px;background:#bdbdbd"></div>
<span class="t rn" style="left:274.8px;top:804px">16</span>
<div class="a" style="left:284.3px;top:819px;width:1px;height:3px;background:#bdbdbd"></div>
<div class="a" style="left:299.3px;top:819px;width:1px;height:2px;background:#bdbdbd"></div>
<span class="t rn" style="left:304.7px;top:804px">18</span>
<div class="a" style="left:314.2px;top:819px;width:1px;height:3px;background:#bdbdbd"></div>
<div class="a" style="left:329.1px;top:819px;width:1px;height:2px;background:#bdbdbd"></div>
<span class="t rn" style="left:334.5px;top:804px">20</span>
<div class="a" style="left:344.0px;top:819px;width:1px;height:3px;background:#bdbdbd"></div>
<div class="a" style="left:358.9px;top:819px;width:1px;height:2px;background:#bdbdbd"></div>
<span class="t rn" style="left:364.3px;top:804px">22</span>
<div class="a" style="left:373.8px;top:819px;width:1px;height:3px;background:#bdbdbd"></div>
<div class="a" style="left:388.7px;top:819px;width:1px;height:2px;background:#bdbdbd"></div>
<span class="t rn" style="left:394.2px;top:804px">24</span>
<div class="a" style="left:403.7px;top:819px;width:1px;height:3px;background:#bdbdbd"></div>
<div class="a" style="left:418.6px;top:819px;width:1px;height:2px;background:#bdbdbd"></div>
<span class="t rn" style="left:424.0px;top:804px">26</span>
<div class="a" style="left:433.5px;top:819px;width:1px;height:3px;background:#bdbdbd"></div>
<div class="a" style="left:448.4px;top:819px;width:1px;height:2px;background:#bdbdbd"></div>
<span class="t rn" style="left:453.8px;top:804px">28</span>
<div class="a" style="left:463.3px;top:819px;width:1px;height:3px;background:#bdbdbd"></div>
<div class="a" style="left:478.2px;top:819px;width:1px;height:2px;background:#bdbdbd"></div>
<span class="t rn" style="left:483.6px;top:804px">30</span>
<div class="a" style="left:493.1px;top:806px;width:1px;height:16px;background:#cfcfcf"></div>
<div class="a" style="left:493.1px;top:819px;width:1px;height:3px;background:#bdbdbd"></div>
<div class="a" style="left:508.1px;top:819px;width:1px;height:2px;background:#bdbdbd"></div>
<span class="t rn" style="left:513.5px;top:804px">32</span>
<div class="a" style="left:523.0px;top:819px;width:1px;height:3px;background:#bdbdbd"></div>
<div class="a" style="left:537.9px;top:819px;width:1px;height:2px;background:#bdbdbd"></div>
<span class="t rn" style="left:543.3px;top:804px">34</span>
<div class="a" style="left:552.8px;top:819px;width:1px;height:3px;background:#bdbdbd"></div>
<div class="a" style="left:567.7px;top:819px;width:1px;height:2px;background:#bdbdbd"></div>
<span class="t rn" style="left:573.1px;top:804px">36</span>
<div class="a" style="left:582.6px;top:819px;width:1px;height:3px;background:#bdbdbd"></div>
<div class="a" style="left:597.6px;top:819px;width:1px;height:2px;background:#bdbdbd"></div>
<span class="t rn" style="left:603.0px;top:804px">38</span>
<div class="a" style="left:612.5px;top:819px;width:1px;height:3px;background:#bdbdbd"></div>
<div class="a" style="left:627.4px;top:819px;width:1px;height:2px;background:#bdbdbd"></div>
<span class="t rn" style="left:632.8px;top:804px">40</span>
<div class="a" style="left:642.3px;top:819px;width:1px;height:3px;background:#bdbdbd"></div>
<div class="a" style="left:657.2px;top:819px;width:1px;height:2px;background:#bdbdbd"></div>
<span class="t rn" style="left:662.6px;top:804px">42</span>
<div class="a" style="left:672.1px;top:819px;width:1px;height:3px;background:#bdbdbd"></div>
<div class="a" style="left:687.0px;top:819px;width:1px;height:2px;background:#bdbdbd"></div>
<span class="t rn" style="left:692.5px;top:804px">44</span>
<div class="a" style="left:702.0px;top:819px;width:1px;height:3px;background:#bdbdbd"></div>
<div class="a" style="left:716.9px;top:819px;width:1px;height:2px;background:#bdbdbd"></div>
<span class="t rn" style="left:722.3px;top:804px">46</span>
<div class="a" style="left:731.8px;top:819px;width:1px;height:3px;background:#bdbdbd"></div>
<div class="a" style="left:746.7px;top:819px;width:1px;height:2px;background:#bdbdbd"></div>
<span class="t rn" style="left:752.1px;top:804px">48</span>
<div class="a" style="left:761.6px;top:819px;width:1px;height:3px;background:#bdbdbd"></div>
<div class="a" style="left:776.5px;top:819px;width:1px;height:2px;background:#bdbdbd"></div>
<span class="t rn" style="left:782.0px;top:804px">50</span>
<div class="a" style="left:791.5px;top:819px;width:1px;height:3px;background:#bdbdbd"></div>
<div class="a" style="left:806.4px;top:819px;width:1px;height:2px;background:#bdbdbd"></div>
<span class="t rn" style="left:811.8px;top:804px">52</span>
<div class="a" style="left:821.3px;top:819px;width:1px;height:3px;background:#bdbdbd"></div>
<div class="a" style="left:836.2px;top:819px;width:1px;height:2px;background:#bdbdbd"></div>
<span class="t rn" style="left:841.6px;top:804px">54</span>
<div class="a" style="left:851.1px;top:819px;width:1px;height:3px;background:#bdbdbd"></div>
<div class="a" style="left:866.0px;top:819px;width:1px;height:2px;background:#bdbdbd"></div>
<span class="t rn" style="left:871.4px;top:804px">56</span>
<div class="a" style="left:880.9px;top:819px;width:1px;height:3px;background:#bdbdbd"></div>
<div class="a" style="left:895.9px;top:819px;width:1px;height:2px;background:#bdbdbd"></div>
<span class="t rn" style="left:901.3px;top:804px">58</span>
<div class="a" style="left:910.8px;top:819px;width:1px;height:3px;background:#bdbdbd"></div>
<div class="a" style="left:925.7px;top:819px;width:1px;height:2px;background:#bdbdbd"></div>
<span class="t rn" style="left:931.1px;top:804px">60</span>
<div class="a" style="left:940.6px;top:806px;width:1px;height:16px;background:#cfcfcf"></div>
<div class="a" style="left:940.6px;top:819px;width:1px;height:3px;background:#bdbdbd"></div>
<div class="a" style="left:955.5px;top:819px;width:1px;height:2px;background:#bdbdbd"></div>
<span class="t rn" style="left:960.9px;top:804px">62</span>
<div class="a" style="left:970.4px;top:819px;width:1px;height:3px;background:#bdbdbd"></div>
<div class="a" style="left:985.3px;top:819px;width:1px;height:2px;background:#bdbdbd"></div>
<span class="t rn" style="left:990.8px;top:804px">64</span>
<div class="a" style="left:1000.3px;top:819px;width:1px;height:3px;background:#bdbdbd"></div>
<div class="a" style="left:1015.2px;top:819px;width:1px;height:2px;background:#bdbdbd"></div>
<span class="t rn" style="left:1020.6px;top:804px">66</span>
<div class="a" style="left:1030.1px;top:819px;width:1px;height:3px;background:#bdbdbd"></div>
<div class="a" style="left:1045.0px;top:819px;width:1px;height:2px;background:#bdbdbd"></div>
<span class="t rn" style="left:1050.4px;top:804px">68</span>
<div class="a" style="left:1059.9px;top:819px;width:1px;height:3px;background:#bdbdbd"></div>
<div class="a" style="left:1074.8px;top:819px;width:1px;height:2px;background:#bdbdbd"></div>
<span class="t rn" style="left:1080.2px;top:804px">70</span>
<div class="a" style="left:1089.8px;top:819px;width:1px;height:3px;background:#bdbdbd"></div>
<div class="a" style="left:1104.7px;top:819px;width:1px;height:2px;background:#bdbdbd"></div>
<span class="t rn" style="left:1110.1px;top:804px">72</span>
<div class="a" style="left:1119.6px;top:819px;width:1px;height:3px;background:#bdbdbd"></div>
<div class="a" style="left:1134.5px;top:819px;width:1px;height:2px;background:#bdbdbd"></div>
<span class="t rn" style="left:1139.9px;top:804px">74</span>
<div class="a" style="left:1149.4px;top:819px;width:1px;height:3px;background:#bdbdbd"></div>
<div class="a" style="left:1164.3px;top:819px;width:1px;height:2px;background:#bdbdbd"></div>
<span class="t rn" style="left:1169.7px;top:804px">76</span>
<div class="a" style="left:1179.2px;top:819px;width:1px;height:3px;background:#bdbdbd"></div>
<div class="a" style="left:1194.2px;top:819px;width:1px;height:2px;background:#bdbdbd"></div>
<span class="t rn" style="left:1199.6px;top:804px">78</span>
<div class="a" style="left:1209.1px;top:819px;width:1px;height:3px;background:#bdbdbd"></div>
<div class="a" style="left:1224.0px;top:819px;width:1px;height:2px;background:#bdbdbd"></div>
<span class="t rn" style="left:1229.4px;top:804px">80</span>
<div class="a" style="left:1238.9px;top:819px;width:1px;height:3px;background:#bdbdbd"></div>
<div class="a" style="left:1253.8px;top:819px;width:1px;height:2px;background:#bdbdbd"></div>
<span class="t rn" style="left:1259.2px;top:804px">82</span>
<div class="a" style="left:1268.7px;top:819px;width:1px;height:3px;background:#bdbdbd"></div>
<div class="a" style="left:1283.6px;top:819px;width:1px;height:2px;background:#bdbdbd"></div>
<span class="t rn" style="left:1289.1px;top:804px">84</span>
<div class="a" style="left:1298.6px;top:819px;width:1px;height:3px;background:#bdbdbd"></div>
<div class="a" style="left:1313.5px;top:819px;width:1px;height:2px;background:#bdbdbd"></div>
<span class="t rn" style="left:1318.9px;top:804px">86</span>
<div class="a" style="left:1328.4px;top:819px;width:1px;height:3px;background:#bdbdbd"></div>
<div class="a" style="left:1343.3px;top:819px;width:1px;height:2px;background:#bdbdbd"></div>
<span class="t rn" style="left:1348.7px;top:804px">88</span>
<div class="a" style="left:1358.2px;top:819px;width:1px;height:3px;background:#bdbdbd"></div>
<div class="a" style="left:1373.1px;top:819px;width:1px;height:2px;background:#bdbdbd"></div>
<span class="t rn" style="left:1378.5px;top:804px">90</span>
<div class="a" style="left:1388.0px;top:806px;width:1px;height:16px;background:#cfcfcf"></div>
<div class="a" style="left:1388.0px;top:819px;width:1px;height:3px;background:#bdbdbd"></div>
<span class="t rn" style="left:42px;top:804px;color:#7a9ad0">0</span>
<div class="a" style="left:43px;top:805px;width:6px;height:12px;background:#5d92e0"></div>
<div class="a" style="left:36px;top:824px;width:50px;height:12.5px;background:#2f2f2f"></div>
<span class="t" style="left:40px;top:825.5px;font-size:8.6px;letter-spacing:0.6px;color:#d8d8d8">0 F</span>
<svg class="a" style="left:80px;top:825px" width="6" height="11"><path d="M0.5 4 L3 1.5 L5.5 4 M0.5 7 L3 9.5 L5.5 7" stroke="#aaa" fill="none" stroke-width="0.9"/></svg>
<div class="a" style="left:92px;top:824px;width:1306px;height:12.5px;background:#5a5a5a"></div>
<div class="a" style="left:95px;top:826px;width:1px;height:9px;background:#777"></div>
<div class="a" style="left:97px;top:826px;width:1px;height:9px;background:#777"></div>
<span class="t" style="left:103px;top:825.5px;font-size:8.6px;letter-spacing:0.6px;color:#dcdcdc">0 F</span>
<span class="t" style="left:1369px;top:825.5px;font-size:8.6px;color:#dcdcdc">90 F</span>
<div class="a" style="left:1391px;top:826px;width:1px;height:9px;background:#777"></div>
<div class="a" style="left:1393px;top:826px;width:1px;height:9px;background:#777"></div>
<div class="a" style="left:1404px;top:807px;width:49px;height:12px;background:#2f2f2f"></div>
<span class="t" style="left:1407px;top:808px;font-size:8.6px;color:#d8d8d8">0 F</span>
<svg class="a" style="left:1446px;top:807.5px" width="6" height="11"><path d="M0.5 4 L3 1.5 L5.5 4 M0.5 7 L3 9.5 L5.5 7" stroke="#aaa" fill="none" stroke-width="0.9"/></svg>
<div class="a" style="left:1404px;top:824px;width:49px;height:12px;background:#2f2f2f"></div>
<span class="t" style="left:1407px;top:825px;font-size:8.6px;color:#d8d8d8">90 F</span>
<svg class="a" style="left:1446px;top:824.5px" width="6" height="11"><path d="M0.5 4 L3 1.5 L5.5 4 M0.5 7 L3 9.5 L5.5 7" stroke="#aaa" fill="none" stroke-width="0.9"/></svg>
<!-- playback -->
<div class="a" style="left:520px;top:842px;width:18px;height:18px;background:#474747"></div>
<svg class="a" style="left:520px;top:842px" width="18" height="18"><rect x="1.5" y="2.5" width="14" height="13" fill="#e4e4e4"/><rect x="1.5" y="2" width="14" height="1.5" fill="#111"/><path d="M5 13 Q3 11 5 9.5 L10 6 Q12 5 12.5 7 Q13 8.5 11 9.5 L7 12.5 Q6 13.5 5 13Z" fill="#b05a40"/></svg>
<div class="a" style="left:548px;top:841px;width:146px;height:20px;background:#474747"></div>
<svg class="a" style="left:548px;top:841px" width="146" height="20"><g fill="#151515">
<rect x="5" y="5" width="2" height="10"/><path d="M16 5 L7.5 10 L16 15Z"/>
<rect x="26.5" y="5" width="2" height="10" fill="#eee"/><path d="M38 5 L29.5 10 L38 15Z"/>
<path d="M50 5 L41.5 10 L50 15Z"/><rect x="51.5" y="5" width="2" height="10"/>
<path d="M63 4 L75 10 L63 16Z"/>
<rect x="86" y="5" width="2" height="10"/><path d="M89.5 5 L98 10 L89.5 15Z"/>
<path d="M107 5 L115.5 10 L107 15Z"/><rect x="116.5" y="5" width="2" height="10" fill="#eee"/>
<path d="M129 5 L137.5 10 L129 15Z"/><rect x="138" y="5" width="2" height="10"/>
</g><g stroke="#3d3d3d"><line x1="20.5" y1="0" x2="20.5" y2="20"/><line x1="41.5" y1="0" x2="41.5" y2="20"/><line x1="62" y1="0" x2="62" y2="20"/><line x1="83" y1="0" x2="83" y2="20"/><line x1="104" y1="0" x2="104" y2="20"/><line x1="125" y1="0" x2="125" y2="20"/></g></svg>
<div class="a" style="left:703px;top:841px;width:41px;height:20px;background:#4b72ad"></div>
<svg class="a" style="left:703px;top:841px" width="41" height="20"><path d="M6 13 Q3 7 10 5 Q16 5 16 10 Q16 14 11 15" stroke="#111" stroke-width="2.2" fill="none"/><path d="M9 13 L12 15.5 L9 18Z" fill="#111"/><line x1="20.5" y1="0" x2="20.5" y2="20" stroke="#3d5d90"/><rect x="26" y="3" width="9" height="15" fill="#f29a3a" stroke="#2a1a0a"/><path d="M26 7 H35 M26 10.5 H35 M26 14 H35" stroke="#2a1a0a"/></svg>
<div class="a" style="left:746px;top:841px;width:20px;height:20px;background:#4b72ad"></div>
<svg class="a" style="left:746px;top:841px" width="20" height="20"><path d="M3 10 L9 6 L12 15 L6 15Z" fill="#111"/><path d="M11 6 Q14 8 13 11 M13 4 Q17 8 15 13" stroke="#111" stroke-width="1.2" fill="none"/></svg>
<div class="a" style="left:775px;top:841px;width:62px;height:20px;background:#474747"></div>
<svg class="a" style="left:775px;top:841px" width="62" height="20"><circle cx="10" cy="10" r="6" fill="#6a4a44" opacity="0.8"/><circle cx="31" cy="10" r="6.5" fill="#d84848" stroke="#2a0a0a" stroke-width="1"/><path d="M29 5.5 Q26 10 29 14.5 M33 5.5 Q36 10 33 14.5" stroke="#2a0a0a" stroke-width="1.5" fill="none"/><circle cx="51.5" cy="10" r="6.5" fill="#d84848" stroke="#2a0a0a" stroke-width="1"/><circle cx="51.5" cy="10" r="3" fill="none" stroke="#2a0a0a" stroke-width="2" stroke-dasharray="1.2 1"/></svg>
<div class="a" style="left:845px;top:841px;width:84px;height:20px;background:#4b72ad"></div>
<svg class="a" style="left:845px;top:841px" width="104" height="20"><path d="M10.5 3 V17 M3.5 10 H17.5" stroke="#f29a3a" stroke-width="2"/><path d="M27 15 A6 6 0 0 1 29 4.5 M33 5 A6 6 0 0 1 31 15.5" stroke="#f29a3a" stroke-width="2.2" fill="none"/><rect x="46" y="4" width="12" height="12" fill="#f29a3a" stroke="#2a1a0a" stroke-width="0.8"/><path d="M46 11 H52 V16 M52 11 L58 4" stroke="#2a1a0a" stroke-width="0.8" fill="none"/><circle cx="73" cy="10" r="7" fill="none" stroke="#f29a3a" stroke-width="1.4"/><text x="69.5" y="14" font-family="Liberation Sans" font-weight="bold" font-size="10" fill="#111">P</text><rect x="84" y="0" width="20" height="20" fill="#474747"/><g fill="#f29a3a"><circle cx="89" cy="5" r="1.5"/><circle cx="94" cy="5" r="1.5"/><circle cx="89" cy="10" r="1.5"/><circle cx="94" cy="10" r="1.5"/></g><g fill="#111"><circle cx="99" cy="5" r="1.5"/><circle cx="99" cy="10" r="1.5"/><circle cx="89" cy="15" r="1.5"/><circle cx="94" cy="15" r="1.5"/><circle cx="99" cy="15" r="1.5"/></g></svg>
<div class="a" style="left:958px;top:841px;width:20px;height:20px;background:#e5f57e"></div>
<svg class="a" style="left:958px;top:841px" width="20" height="20"><circle cx="7" cy="7" r="4.5" fill="#ddd" stroke="#555" stroke-width="0.7"/><circle cx="10" cy="10" r="4.5" fill="#f29a3a" stroke="#555" stroke-width="0.7"/><circle cx="13" cy="13" r="4.5" fill="#eee" stroke="#555" stroke-width="0.7"/></svg>
<!-- material manager -->
<div class="a" style="left:30px;top:863px;width:1044px;height:1px;background:#474747"></div>
<div class="a" style="left:30px;top:881.5px;width:1043px;height:1px;background:#444"></div>
<div class="a" style="left:30px;top:1012.5px;width:1044px;height:1px;background:#474747"></div>
<div class="a" style="left:29.5px;top:863px;width:1px;height:150px;background:#474747"></div>
<div class="ham" style="left:34px;top:868px"></div>
<span class="t" style="left:52.5px;top:867.5px">Create</span>
<span class="t y" style="left:87px;top:867.5px">Edit</span>
<span class="t" style="left:112px;top:867.5px">View</span>
<span class="t" style="left:140.5px;top:867.5px">Select</span>
<span class="t" style="left:172.5px;top:867.5px">Material</span>
<span class="t" style="left:213.5px;top:867.5px">Texture</span>
<div class="a" style="left:33px;top:883px;width:16px;height:3px;background:repeating-linear-gradient(90deg,#555 0 1px,transparent 1px 2.5px)"></div>
<div class="a" style="left:31px;top:889px;width:19px;height:19px;background:#474747"></div>
<svg class="a" style="left:31px;top:889px" width="19" height="19"><path d="M9.5 3.5 V15.5 M3.5 9.5 H15.5" stroke="#d8d8d8" stroke-width="1.4"/><path d="M15 18 L18 15 V18Z" fill="#ccc"/></svg>
<div class="a" style="left:31px;top:908px;width:19px;height:21px;background:#434343"></div>
<svg class="a" style="left:31px;top:908px" width="19" height="21"><path d="M4 17 L15 6 M9 6 H15 V12" stroke="#5a5a5a" stroke-width="1.3" fill="none"/></svg>
<svg width="0" height="0" style="position:absolute"><defs><radialGradient id="rs1" cx="0.38" cy="0.32" r="0.75"><stop offset="0" stop-color="#c4c4c4"/><stop offset="0.55" stop-color="#b0b0b0"/><stop offset="1" stop-color="#a8a8a8"/></radialGradient><radialGradient id="rs2" cx="0.38" cy="0.32" r="0.75"><stop offset="0" stop-color="#7a8088"/><stop offset="0.55" stop-color="#50565e"/><stop offset="1" stop-color="#3e444c"/></radialGradient><radialGradient id="rs3" cx="0.38" cy="0.32" r="0.75"><stop offset="0" stop-color="#151515"/><stop offset="0.55" stop-color="#050505"/><stop offset="1" stop-color="#000"/></radialGradient><radialGradient id="rs4" cx="0.38" cy="0.32" r="0.75"><stop offset="0" stop-color="#f0f2f4"/><stop offset="0.55" stop-color="#d8dadc"/><stop offset="1" stop-color="#b8bcc0"/></radialGradient><radialGradient id="rs5" cx="0.38" cy="0.32" r="0.75"><stop offset="0" stop-color="#ffffff"/><stop offset="0.55" stop-color="#e4e4e4"/><stop offset="1" stop-color="#c4c4c4"/></radialGradient><radialGradient id="rs6" cx="0.38" cy="0.32" r="0.75"><stop offset="0" stop-color="#3a3a3a"/><stop offset="0.55" stop-color="#101010"/><stop offset="1" stop-color="#000"/></radialGradient><radialGradient id="rs7" cx="0.38" cy="0.32" r="0.75"><stop offset="0" stop-color="#2a2a2a"/><stop offset="0.55" stop-color="#080808"/><stop offset="1" stop-color="#000"/></radialGradient><radialGradient id="rs8" cx="0.38" cy="0.32" r="0.75"><stop offset="0" stop-color="#e8e8e8"/><stop offset="0.55" stop-color="#cacaca"/><stop offset="1" stop-color="#a0a0a0"/></radialGradient><radialGradient id="rs9" cx="0.38" cy="0.32" r="0.75"><stop offset="0" stop-color="#5a5a5a"/><stop offset="0.55" stop-color="#303030"/><stop offset="1" stop-color="#1a1a1a"/></radialGradient><radialGradient id="rs10" cx="0.38" cy="0.32" r="0.75"><stop offset="0" stop-color="#7a5040"/><stop offset="0.55" stop-color="#4a2a1e"/><stop offset="1" stop-color="#2a160e"/></radialGradient><radialGradient id="rs11" cx="0.38" cy="0.32" r="0.75"><stop offset="0" stop-color="#f6c4ae"/><stop offset="0.55" stop-color="#e6a890"/><stop offset="1" stop-color="#c88872"/></radialGradient><radialGradient id="rs12" cx="0.38" cy="0.32" r="0.75"><stop offset="0" stop-color="#9a9a9a"/><stop offset="0.55" stop-color="#707070"/><stop offset="1" stop-color="#505050"/></radialGradient><radialGradient id="rs13" cx="0.38" cy="0.32" r="0.75"><stop offset="0" stop-color="#dcdcdc"/><stop offset="0.55" stop-color="#b8b8b8"/><stop offset="1" stop-color="#8a8a8a"/></radialGradient></defs></svg>
<div class="mt" style="left:54.4px"><div class="s"><svg width="32" height="31"><rect width="32" height="31" fill="#e8e8e8"/><g fill="#9a9a9a"><rect x="8" y="0" width="8" height="8"/><rect x="24" y="0" width="8" height="8"/><rect x="0" y="8" width="8" height="8"/><rect x="16" y="8" width="8" height="8"/><rect x="8" y="16" width="8" height="8"/><rect x="24" y="16" width="8" height="8"/><rect x="0" y="24" width="8" height="8"/><rect x="16" y="24" width="8" height="8"/></g><circle cx="16" cy="15" r="15" fill="url(#rs1)"/></svg></div><div class="lb">Specular</div></div>
<div class="mt" style="left:91.3px"><div class="s"><svg width="32" height="31"><rect width="32" height="31" fill="#e8e8e8"/><g fill="#9a9a9a"><rect x="8" y="0" width="8" height="8"/><rect x="24" y="0" width="8" height="8"/><rect x="0" y="8" width="8" height="8"/><rect x="16" y="8" width="8" height="8"/><rect x="8" y="16" width="8" height="8"/><rect x="24" y="16" width="8" height="8"/><rect x="0" y="24" width="8" height="8"/><rect x="16" y="24" width="8" height="8"/></g><circle cx="16" cy="15" r="15" fill="url(#rs2)"/><circle cx="11" cy="10" r="2.5" fill="#b0b8c0" opacity="0.6"/></svg></div><div class="lb">Glossy M</div></div>
<div class="mt" style="left:128.2px"><div class="s"><svg width="32" height="31"><rect width="32" height="31" fill="#e8e8e8"/><g fill="#9a9a9a"><rect x="8" y="0" width="8" height="8"/><rect x="24" y="0" width="8" height="8"/><rect x="0" y="8" width="8" height="8"/><rect x="16" y="8" width="8" height="8"/><rect x="8" y="16" width="8" height="8"/><rect x="24" y="16" width="8" height="8"/><rect x="0" y="24" width="8" height="8"/><rect x="16" y="24" width="8" height="8"/></g><circle cx="16" cy="15" r="15" fill="url(#rs3)"/></svg></div><div class="lb">Diffuse M</div></div>
<div class="mt sel" style="left:165.1px"><div class="s"><svg width="32" height="31"><rect width="32" height="31" fill="#e8e8e8"/><g fill="#9a9a9a"><rect x="8" y="0" width="8" height="8"/><rect x="24" y="0" width="8" height="8"/><rect x="0" y="8" width="8" height="8"/><rect x="16" y="8" width="8" height="8"/><rect x="8" y="16" width="8" height="8"/><rect x="24" y="16" width="8" height="8"/><rect x="0" y="24" width="8" height="8"/><rect x="16" y="24" width="8" height="8"/></g><circle cx="16" cy="15" r="15" fill="url(#rs4)"/><text x="1" y="9" font-family="Liberation Sans" font-weight="bold" font-size="9" fill="#30e070">MIX</text></svg></div><div class="lb">shirts</div></div>
<div class="mt sel" style="left:202.0px"><div class="s"><svg width="32" height="31"><rect width="32" height="31" fill="#e8e8e8"/><g fill="#9a9a9a"><rect x="8" y="0" width="8" height="8"/><rect x="24" y="0" width="8" height="8"/><rect x="0" y="8" width="8" height="8"/><rect x="16" y="8" width="8" height="8"/><rect x="8" y="16" width="8" height="8"/><rect x="24" y="16" width="8" height="8"/><rect x="0" y="24" width="8" height="8"/><rect x="16" y="24" width="8" height="8"/></g><circle cx="16" cy="15" r="15" fill="url(#rs5)"/></svg></div><div class="lb">shirts</div></div>
<div class="mt sel" style="left:238.9px"><div class="s"><svg width="32" height="31"><rect width="32" height="31" fill="#e8e8e8"/><g fill="#9a9a9a"><rect x="8" y="0" width="8" height="8"/><rect x="24" y="0" width="8" height="8"/><rect x="0" y="8" width="8" height="8"/><rect x="16" y="8" width="8" height="8"/><rect x="8" y="16" width="8" height="8"/><rect x="24" y="16" width="8" height="8"/><rect x="0" y="24" width="8" height="8"/><rect x="16" y="24" width="8" height="8"/></g><circle cx="16" cy="15" r="15" fill="url(#rs6)"/><text x="1" y="9" font-family="Liberation Sans" font-weight="bold" font-size="9" fill="#30e070">MIX</text></svg></div><div class="lb">black vel</div></div>
<div class="mt sel" style="left:275.8px"><div class="s"><svg width="32" height="31"><rect width="32" height="31" fill="#e8e8e8"/><g fill="#9a9a9a"><rect x="8" y="0" width="8" height="8"/><rect x="24" y="0" width="8" height="8"/><rect x="0" y="8" width="8" height="8"/><rect x="16" y="8" width="8" height="8"/><rect x="8" y="16" width="8" height="8"/><rect x="24" y="16" width="8" height="8"/><rect x="0" y="24" width="8" height="8"/><rect x="16" y="24" width="8" height="8"/></g><circle cx="16" cy="15" r="15" fill="url(#rs7)"/><circle cx="12" cy="11" r="1.2" fill="#fff"/></svg></div><div class="lb">OctGloss</div></div>
<div class="mt sel" style="left:312.7px"><div class="s"><svg width="32" height="31"><rect width="32" height="31" fill="#e8e8e8"/><g fill="#9a9a9a"><rect x="8" y="0" width="8" height="8"/><rect x="24" y="0" width="8" height="8"/><rect x="0" y="8" width="8" height="8"/><rect x="16" y="8" width="8" height="8"/><rect x="8" y="16" width="8" height="8"/><rect x="24" y="16" width="8" height="8"/><rect x="0" y="24" width="8" height="8"/><rect x="16" y="24" width="8" height="8"/></g><circle cx="16" cy="15" r="15" fill="url(#rs8)"/></svg></div><div class="lb">OctGloss</div></div>
<div class="mt sel" style="left:349.6px"><div class="s"><svg width="32" height="31"><rect width="32" height="31" fill="#e8e8e8"/><g fill="#9a9a9a"><rect x="8" y="0" width="8" height="8"/><rect x="24" y="0" width="8" height="8"/><rect x="0" y="8" width="8" height="8"/><rect x="16" y="8" width="8" height="8"/><rect x="8" y="16" width="8" height="8"/><rect x="24" y="16" width="8" height="8"/><rect x="0" y="24" width="8" height="8"/><rect x="16" y="24" width="8" height="8"/></g><circle cx="16" cy="15" r="15" fill="url(#rs9)"/></svg></div><div class="lb">OctGloss</div></div>
<div class="mt sel" style="left:386.5px"><div class="s"><svg width="32" height="31"><rect width="32" height="31" fill="#e8e8e8"/><g fill="#9a9a9a"><rect x="8" y="0" width="8" height="8"/><rect x="24" y="0" width="8" height="8"/><rect x="0" y="8" width="8" height="8"/><rect x="16" y="8" width="8" height="8"/><rect x="8" y="16" width="8" height="8"/><rect x="24" y="16" width="8" height="8"/><rect x="0" y="24" width="8" height="8"/><rect x="16" y="24" width="8" height="8"/></g><circle cx="16" cy="15" r="15" fill="url(#rs10)"/></svg></div><div class="lb">OctGloss</div></div>
<div class="mt sel" style="left:423.4px"><div class="s"><svg width="32" height="31"><rect width="32" height="31" fill="#e8e8e8"/><g fill="#9a9a9a"><rect x="8" y="0" width="8" height="8"/><rect x="24" y="0" width="8" height="8"/><rect x="0" y="8" width="8" height="8"/><rect x="16" y="8" width="8" height="8"/><rect x="8" y="16" width="8" height="8"/><rect x="24" y="16" width="8" height="8"/><rect x="0" y="24" width="8" height="8"/><rect x="16" y="24" width="8" height="8"/></g><circle cx="16" cy="15" r="15" fill="url(#rs11)"/></svg></div><div class="lb">skin mat</div></div>
<div class="mt sel" style="left:460.3px"><div class="s"><svg width="32" height="31"><rect width="32" height="31" fill="#e8e8e8"/><g fill="#9a9a9a"><rect x="8" y="0" width="8" height="8"/><rect x="24" y="0" width="8" height="8"/><rect x="0" y="8" width="8" height="8"/><rect x="16" y="8" width="8" height="8"/><rect x="8" y="16" width="8" height="8"/><rect x="24" y="16" width="8" height="8"/><rect x="0" y="24" width="8" height="8"/><rect x="16" y="24" width="8" height="8"/></g><circle cx="16" cy="15" r="15" fill="url(#rs12)"/></svg></div><div class="lb">OctGloss</div></div>
<div class="mt sel" style="left:497.2px"><div class="s"><svg width="32" height="31"><rect width="32" height="31" fill="#e8e8e8"/><g fill="#9a9a9a"><rect x="8" y="0" width="8" height="8"/><rect x="24" y="0" width="8" height="8"/><rect x="0" y="8" width="8" height="8"/><rect x="16" y="8" width="8" height="8"/><rect x="8" y="16" width="8" height="8"/><rect x="24" y="16" width="8" height="8"/><rect x="0" y="24" width="8" height="8"/><rect x="16" y="24" width="8" height="8"/></g><circle cx="16" cy="15" r="15" fill="url(#rs13)"/></svg></div><div class="lb">OctGloss</div></div>
<!-- coordinates -->
<div class="a" style="left:1074px;top:863px;width:379px;height:150px;border:1px solid #474747"></div>
<div class="a" style="left:1077px;top:881.5px;width:373px;height:1px;background:#474747"></div>
<div class="ham" style="left:1080px;top:868px"></div>
<span class="t g" style="left:1097px;top:868px">--</span>
<span class="t g" style="left:1216px;top:868px">--</span>
<span class="t g" style="left:1336px;top:868px">--</span>
<span class="t" style="left:1080px;top:889.5px;font-size:8.8px;color:#e8e8e8;font-weight:bold">X</span>
<div class="fld" style="left:1088px;top:888px;width:111px"></div>
<span class="t" style="left:1090.5px;top:889.5px;color:#6e6e6e">0 cm</span>
<svg class="a" style="left:1193px;top:889px" width="6" height="11"><path d="M0.5 4 L3 1.5 L5.5 4 M0.5 7 L3 9.5 L5.5 7" stroke="#666" fill="none" stroke-width="0.9"/></svg>
<span class="t" style="left:1204.5px;top:889.5px;font-size:8.8px;color:#e8e8e8;font-weight:bold">X</span>
<div class="fld" style="left:1211px;top:888px;width:111px"></div>
<span class="t" style="left:1213.5px;top:889.5px;color:#6e6e6e">0 cm</span>
<svg class="a" style="left:1316px;top:889px" width="6" height="11"><path d="M0.5 4 L3 1.5 L5.5 4 M0.5 7 L3 9.5 L5.5 7" stroke="#666" fill="none" stroke-width="0.9"/></svg>
<span class="t" style="left:1329px;top:889.5px;font-size:8.8px;color:#e8e8e8;font-weight:bold">H</span>
<div class="fld" style="left:1336px;top:888px;width:114px"></div>
<span class="t" style="left:1338.5px;top:889.5px;color:#6e6e6e">0 °</span>
<svg class="a" style="left:1444px;top:889px" width="6" height="11"><path d="M0.5 4 L3 1.5 L5.5 4 M0.5 7 L3 9.5 L5.5 7" stroke="#666" fill="none" stroke-width="0.9"/></svg>
<span class="t" style="left:1080px;top:906.0px;font-size:8.8px;color:#e8e8e8;font-weight:bold">Y</span>
<div class="fld" style="left:1088px;top:904.5px;width:111px"></div>
<span class="t" style="left:1090.5px;top:906.0px;color:#6e6e6e">0 cm</span>
<svg class="a" style="left:1193px;top:905.5px" width="6" height="11"><path d="M0.5 4 L3 1.5 L5.5 4 M0.5 7 L3 9.5 L5.5 7" stroke="#666" fill="none" stroke-width="0.9"/></svg>
<span class="t" style="left:1204.5px;top:906.0px;font-size:8.8px;color:#e8e8e8;font-weight:bold">Y</span>
<div class="fld" style="left:1211px;top:904.5px;width:111px"></div>
<span class="t" style="left:1213.5px;top:906.0px;color:#6e6e6e">0 cm</span>
<svg class="a" style="left:1316px;top:905.5px" width="6" height="11"><path d="M0.5 4 L3 1.5 L5.5 4 M0.5 7 L3 9.5 L5.5 7" stroke="#666" fill="none" stroke-width="0.9"/></svg>
<span class="t" style="left:1329px;top:906.0px;font-size:8.8px;color:#e8e8e8;font-weight:bold">P</span>
<div class="fld" style="left:1336px;top:904.5px;width:114px"></div>
<span class="t" style="left:1338.5px;top:906.0px;color:#6e6e6e">0 °</span>
<svg class="a" style="left:1444px;top:905.5px" width="6" height="11"><path d="M0.5 4 L3 1.5 L5.5 4 M0.5 7 L3 9.5 L5.5 7" stroke="#666" fill="none" stroke-width="0.9"/></svg>
<span class="t" style="left:1080px;top:922.5px;font-size:8.8px;color:#e8e8e8;font-weight:bold">Z</span>
<div class="fld" style="left:1088px;top:921px;width:111px"></div>
<span class="t" style="left:1090.5px;top:922.5px;color:#6e6e6e">0 cm</span>
<svg class="a" style="left:1193px;top:922px" width="6" height="11"><path d="M0.5 4 L3 1.5 L5.5 4 M0.5 7 L3 9.5 L5.5 7" stroke="#666" fill="none" stroke-width="0.9"/></svg>
<span class="t" style="left:1204.5px;top:922.5px;font-size:8.8px;color:#e8e8e8;font-weight:bold">Z</span>
<div class="fld" style="left:1211px;top:921px;width:111px"></div>
<span class="t" style="left:1213.5px;top:922.5px;color:#6e6e6e">0 cm</span>
<svg class="a" style="left:1316px;top:922px" width="6" height="11"><path d="M0.5 4 L3 1.5 L5.5 4 M0.5 7 L3 9.5 L5.5 7" stroke="#666" fill="none" stroke-width="0.9"/></svg>
<span class="t" style="left:1329px;top:922.5px;font-size:8.8px;color:#e8e8e8;font-weight:bold">B</span>
<div class="fld" style="left:1336px;top:921px;width:114px"></div>
<span class="t" style="left:1338.5px;top:922.5px;color:#6e6e6e">0 °</span>
<svg class="a" style="left:1444px;top:922px" width="6" height="11"><path d="M0.5 4 L3 1.5 L5.5 4 M0.5 7 L3 9.5 L5.5 7" stroke="#666" fill="none" stroke-width="0.9"/></svg>
<div class="a" style="left:1087px;top:939px;width:113px;height:12.5px;background:#454545"></div><span class="t" style="left:1092px;top:940px;color:#777">World</span><svg class="a" style="left:1189px;top:943px" width="7" height="5"><path d="M0.5 0.5 L3.5 3.5 L6.5 0.5" stroke="#888" fill="none"/></svg>
<div class="a" style="left:1211px;top:939px;width:113px;height:12.5px;background:#454545"></div><span class="t" style="left:1216px;top:940px;color:#777">Scale</span><svg class="a" style="left:1313px;top:943px" width="7" height="5"><path d="M0.5 0.5 L3.5 3.5 L6.5 0.5" stroke="#888" fill="none"/></svg>
<div class="a" style="left:1336px;top:939px;width:114px;height:12.5px;background:#555;border-radius:1px"></div><span class="t" style="left:1382px;top:940px;color:#e0e0e0">Apply</span>
<!-- status -->
<div class="a" style="left:0;top:1015px;width:1458px;height:1px;background:#444"></div>
<div class="ham" style="left:4px;top:1020px"></div>
<span class="t" style="left:22.5px;top:1020px;color:#d4d4d4;font-size:8.05px">Octane:Collect time:0.546 ms.&nbsp; Check time:1.013 ms.&nbsp; chk:1462&nbsp; instUpd:0&nbsp; cnt:16</span><div class="a" style="left:1453px;top:47px;width:5px;height:984px;background:#353535"></div>
<div class="a" style="left:1458px;top:19px;width:1px;height:1012px;background:#454545"></div>
<!-- objects -->
<div class="a" style="left:1495px;top:19.5px;width:425px;height:14.5px;background:#323232"></div>
<div class="a" style="left:1459px;top:19.5px;width:36px;height:15px;background:#3b3b3b"></div>
<span class="t" style="left:1462.5px;top:22px;color:#dadada">Objects</span>
<span class="t g" style="left:1500px;top:22px;color:#7a7a7a">Takes</span>
<div class="a" style="left:1459px;top:34px;width:461px;height:1px;background:#434343"></div>
<div class="ham" style="left:1463px;top:39px"></div>
<span class="t" style="left:1481px;top:38.5px">File</span>
<span class="t" style="left:1504.5px;top:38.5px">Edit</span>
<span class="t" style="left:1529.5px;top:38.5px">View</span>
<span class="t" style="left:1558px;top:38.5px">Object</span>
<span class="t y" style="left:1592.5px;top:38.5px">Tags</span>
<span class="t" style="left:1619.5px;top:38.5px">Bookmarks</span>
<svg class="a" style="left:1862px;top:36px" width="58" height="14"><g stroke="#a8a8a8" fill="none" stroke-width="1.1"><circle cx="7" cy="5.5" r="3.5"/><path d="M9.5 8 L12.5 11.5"/><path d="M18 7 L23 2.5 L28 7 M19.5 6 V12 H26.5 V6"/><path d="M32 2 H43 L38.5 7.5 V12.5 L36.5 11 V7.5Z"/><rect x="48.5" y="1.5" width="11" height="11"/></g><path d="M54 4.5 V9.5 M51.5 7 H56.5" stroke="#bbb" stroke-width="1.4"/></svg>
<div class="a" style="left:1459px;top:52px;width:461px;height:1px;background:#444"></div>
<div class="a" style="left:1459px;top:54px;width:461px;height:15px;background:#474747"></div>
<div class="a" style="left:1459px;top:84px;width:461px;height:15px;background:#464646"></div>
<div class="a" style="left:1529.5px;top:54px;width:1px;height:434px;background:#4a4a4a"></div>
<div class="a" style="left:1559px;top:54px;width:1px;height:434px;background:#4a4a4a"></div>
<div class="a" style="left:1465.5px;top:55px;width:1px;height:40px;background:#a0a0a0"></div>
<div class="a" style="left:1465.5px;top:62px;width:6px;height:1px;background:#a0a0a0"></div>
<svg class="a" style="left:1471px;top:56px" width="13" height="13"><defs><radialGradient id="os" cx="0.4" cy="0.35" r="0.7"><stop offset="0" stop-color="#d8e8f8"/><stop offset="1" stop-color="#7890b0"/></radialGradient></defs><circle cx="6.5" cy="6.5" r="5.6" fill="url(#os)" stroke="#223" stroke-width="0.8"/><path d="M1.5 6.5 H11.5 M6.5 1.5 V11.5" stroke="#a8c0d8" stroke-width="0.5"/></svg>
<span class="t" style="left:1486px;top:57px;color:#dcdcdc">OctaneSky</span>
<svg class="a" style="left:1461px;top:72px" width="24" height="27"><g stroke="#999" fill="none" stroke-width="0.9"><rect x="1.5" y="2" width="6" height="6"/><path d="M3 5 H6 M4.5 3.5 V6.5 M7.5 5 H10"/><rect x="1.5" y="17" width="6" height="6"/><path d="M3 20 H6 M4.5 18.5 V21.5 M7.5 20 H10"/></g><g stroke="#eee" stroke-width="1.3" fill="none"><path d="M12.5 1 V9 H21"/><path d="M12.5 16 V24 H21"/></g><circle cx="17.5" cy="3.5" r="3.3" fill="#c8e0f8" stroke="#1c2c40" stroke-width="0.8"/><circle cx="17.5" cy="18.5" r="3.3" fill="#c8e0f8" stroke="#1c2c40" stroke-width="0.8"/></svg>
<span class="t" style="left:1486px;top:72px;color:#dcdcdc">Kyle</span>
<span class="t" style="left:1486px;top:87px;color:#dcdcdc">set up</span>
<svg class="a" style="left:1531px;top:56px" width="20" height="43"><g><rect x="1" y="1" width="9" height="9.5" rx="1" fill="#9a9a9a"/><path d="M2.5 9 L8.5 2.5" stroke="#555" stroke-width="1"/><circle cx="16" cy="3.3" r="2.2" fill="#a8a8a8"/><circle cx="16" cy="8.7" r="2.2" fill="#a8a8a8"/></g><g transform="translate(0,15)"><rect x="1" y="1" width="9" height="9.5" rx="1" fill="#9a9a9a"/><path d="M2.5 9 L8.5 2.5" stroke="#555" stroke-width="1"/><circle cx="16" cy="3.3" r="2.2" fill="#a8a8a8"/><circle cx="16" cy="8.7" r="2.2" fill="#a8a8a8"/></g><g transform="translate(0,30)"><rect x="1" y="1" width="9" height="9.5" rx="1" fill="#9a9a9a"/><path d="M2.5 9 L8.5 2.5" stroke="#555" stroke-width="1"/><circle cx="16" cy="3.3" r="2.2" fill="#a8a8a8"/><circle cx="16" cy="8.7" r="2.2" fill="#a8a8a8"/></g></svg>
<svg class="a" style="left:1560px;top:55px" width="13" height="13"><rect x="0" y="0" width="13" height="13" rx="1.5" fill="#14222c"/><path d="M6.5 1.8 A4.7 4.7 0 0 0 6.5 11.2Z" fill="#30b0f0"/><circle cx="6.5" cy="6.5" r="4.7" fill="none" stroke="#30b0f0" stroke-width="1"/></svg>
<div class="a" style="left:1459px;top:488px;width:461px;height:1px;background:#4a4a4a"></div>
<div class="a" style="left:1459px;top:489px;width:461px;height:3px;background:#353535"></div>
<!-- attributes -->
<div class="a" style="left:1504px;top:492.5px;width:416px;height:15.5px;background:#323232"></div>
<span class="t" style="left:1462.5px;top:495.5px;color:#dadada">Attributes</span>
<span class="t" style="left:1508px;top:495.5px;color:#7a7a7a">Layers</span>
<span class="t" style="left:1540px;top:495.5px;color:#7a7a7a">Structure</span>
<div class="a" style="left:1459px;top:508px;width:461px;height:1px;background:#434343"></div>
<div class="ham" style="left:1463px;top:513px"></div>
<span class="t" style="left:1481px;top:512px">Mode</span>
<span class="t" style="left:1513.5px;top:512px">Edit</span>
<span class="t" style="left:1538px;top:512px">User Data</span>
<svg class="a" style="left:1802px;top:510px" width="118" height="15"><g stroke="#a8a8a8" fill="none" stroke-width="1.2"><path d="M2.5 7.5 H13.5 M6.5 3.5 L2.5 7.5 L6.5 11.5"/><path d="M17 7.5 H28 M24 3.5 L28 7.5 L24 11.5" stroke="#555"/><path d="M37.5 2.5 V13.5 M33.5 6.5 L37.5 2.5 L41.5 6.5"/><circle cx="51.5" cy="5.5" r="3.3"/><path d="M54 8 L57.5 12"/><path d="M62 2 H73 L68.5 7.5 V12.5 L66.5 11 V7.5Z"/><rect x="78.5" y="7" width="9" height="6.5" rx="1"/><path d="M80.5 7 V5 Q83 1.5 85.5 5"/><circle cx="98" cy="7.5" r="5.3"/><circle cx="98" cy="7.5" r="1.8"/><rect x="108.5" y="1.5" width="10" height="11"/></g><path d="M113.5 4.5 V9.5 M111 7 H116" stroke="#bbb" stroke-width="1.4"/></svg>
<div class="a" style="left:1459px;top:525px;width:461px;height:1px;background:#444"></div>
</body></html>
